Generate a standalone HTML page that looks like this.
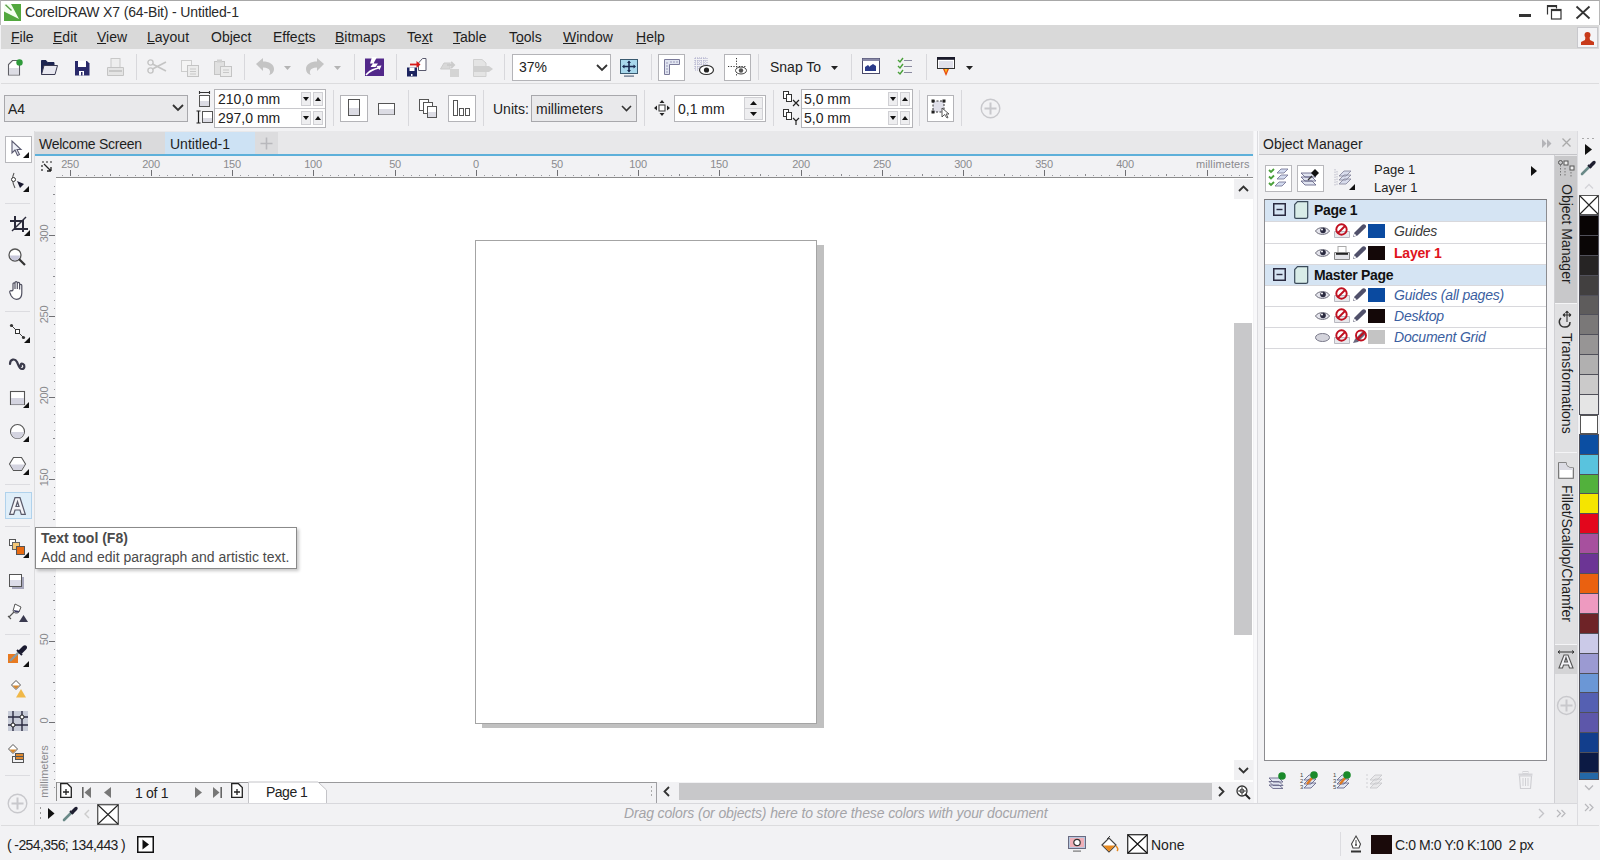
<!DOCTYPE html>
<html><head><meta charset="utf-8">
<style>
*{box-sizing:border-box}
html,body{margin:0;padding:0;width:1600px;height:860px;overflow:hidden;background:#f2f2f4;font-family:"Liberation Sans",sans-serif;color:#1e1e1e}
.a{position:absolute}
.t{position:absolute;white-space:nowrap;line-height:1}
.sep{position:absolute;width:1px;background:#d8d8dc}
svg{position:absolute;overflow:visible}
</style></head><body>
<!-- title bar -->
<div class="a" style="left:0;top:0;width:1600px;height:25px;background:#fff;border-top:1px solid #a8a8a8;border-left:1px solid #b8b8b8;border-right:1px solid #b8b8b8"></div>
<!-- menu bar -->
<div class="a" style="left:1px;top:25px;width:1598px;height:24px;background:#d9d9d9"></div>
<!-- toolbar -->
<div class="a" style="left:1px;top:49px;width:1598px;height:34px;background:#f2f2f4"></div>
<div class="a" style="left:1px;top:83px;width:1598px;height:1px;background:#dcdcde"></div>
<!-- property bar -->
<div class="a" style="left:1px;top:84px;width:1598px;height:47px;background:#f2f2f4"></div>
<!-- toolbox -->
<div class="a" style="left:1px;top:131px;width:34px;height:695px;background:#f2f2f4;border-right:1px solid #dcdcde"></div>
<!-- tabs row -->
<div class="a" style="left:35px;top:131px;width:1218px;height:24px;background:#e8e8ea"></div>
<div class="a" style="left:35px;top:154px;width:1218px;height:2px;background:#5eb0da"></div>
<!-- rulers -->
<div class="a" style="left:35px;top:156px;width:1218px;height:22px;background:#f2f2f4"></div>
<div class="a" style="left:35px;top:156px;width:22px;height:647px;background:#f2f2f4"></div>
<div class="a" style="left:56px;top:177px;width:1px;height:624px;background:#8c8c8c"></div>
<!-- canvas -->
<div class="a" style="left:56px;top:177px;width:1197px;height:605px;background:#fff;border-top:1px solid #8c8c8c"></div>
<!-- page -->
<div class="a" style="left:482px;top:245px;width:342px;height:483px;background:#c0c0c0"></div>
<div class="a" style="left:475px;top:240px;width:342px;height:484px;background:#fff;border:1px solid #a4a4a4"></div>
<!-- page nav bar -->
<div class="a" style="left:57px;top:782px;width:600px;height:21px;background:#f2f2f4;border-top:1px solid #9a9a9c"></div>
<!-- palette row -->
<div class="a" style="left:35px;top:803px;width:1543px;height:1px;background:#d8d8dc"></div>
<div class="a" style="left:1px;top:825px;width:1598px;height:1px;background:#dcdcde"></div>
<!-- docker -->
<div class="a" style="left:1255px;top:131px;width:300px;height:672px;background:#f2f2f4;border-left:1px solid #dcdcde;border-right:1px solid #dcdcde"></div>
<!-- docker tabs -->
<div class="a" style="left:1555px;top:156px;width:23px;height:647px;background:#e8e8ea"></div>
<!-- palette -->
<div class="a" style="left:1577px;top:131px;width:1px;height:695px;background:#dcdcde"></div>

<!-- ===== TITLE BAR ===== -->
<svg style="left:4px;top:4px" width="17" height="17" viewBox="0 0 17 17"><rect x="0" y="0" width="17" height="17" fill="#52a83e"/><path d="M0 0 L7 0 L15 15 L0 7.5 Z" fill="#f4fff0"/><path d="M1.5 0.8 L7.5 6.5" stroke="#5aa048" stroke-width="1.4"/></svg>
<div class="t" style="left:25px;top:5px;font-size:14px;color:#2a2a2a;letter-spacing:-0.15px">CorelDRAW X7 (64-Bit) - Untitled-1</div>
<div class="a" style="left:1519px;top:14px;width:12px;height:3px;background:#333"></div>
<svg style="left:1547px;top:5px" width="15" height="15" viewBox="0 0 15 15"><path d="M0.5 9.5 V0.5 H9.5 V3.5" fill="none" stroke="#333" stroke-width="1.2"/><rect x="0.5" y="0.5" width="9" height="1.6" fill="#333"/><rect x="4.5" y="4.5" width="9.5" height="9.5" fill="#fff" stroke="#333" stroke-width="1.2"/><rect x="4.5" y="4.5" width="9.5" height="1.6" fill="#333"/></svg>
<svg style="left:1576px;top:6px" width="14" height="13" viewBox="0 0 14 13"><path d="M0.5 0.5 L13.5 12.5 M13.5 0.5 L0.5 12.5" stroke="#333" stroke-width="1.8"/></svg>
<!-- ===== MENU ===== -->
<div class="t" style="left:11px;top:30px;font-size:14px"><u>F</u>ile</div>
<div class="t" style="left:53px;top:30px;font-size:14px"><u>E</u>dit</div>
<div class="t" style="left:97px;top:30px;font-size:14px"><u>V</u>iew</div>
<div class="t" style="left:147px;top:30px;font-size:14px"><u>L</u>ayout</div>
<div class="t" style="left:211px;top:30px;font-size:14px">Ob<u>j</u>ect</div>
<div class="t" style="left:273px;top:30px;font-size:14px">Effe<u>c</u>ts</div>
<div class="t" style="left:335px;top:30px;font-size:14px"><u>B</u>itmaps</div>
<div class="t" style="left:407px;top:30px;font-size:14px">Te<u>x</u>t</div>
<div class="t" style="left:453px;top:30px;font-size:14px"><u>T</u>able</div>
<div class="t" style="left:509px;top:30px;font-size:14px">T<u>o</u>ols</div>
<div class="t" style="left:563px;top:30px;font-size:14px"><u>W</u>indow</div>
<div class="t" style="left:636px;top:30px;font-size:14px"><u>H</u>elp</div>
<div class="a" style="left:1577px;top:27px;width:21px;height:21px;background:#f4f4f6;border:1px solid #c8c8cc"></div>
<svg style="left:1580px;top:31px" width="15" height="14" viewBox="0 0 15 14"><circle cx="7.5" cy="4" r="3" fill="#c83a1a"/><path d="M5.5 6 L9.5 6 L10 9 L14 11 L14 14 L1 14 L1 11 L5 9 Z" fill="#c83a1a"/></svg>
<!-- ===== STANDARD TOOLBAR ===== -->
<!-- new -->
<svg style="left:8px;top:60px" width="16" height="16" viewBox="0 0 16 16"><path d="M0.5 15 V4.5 L4.5 0.5 H11.5 V15 Z" fill="#fff" stroke="#606066" stroke-width="1.1"/><rect x="1" y="8" width="10" height="6.5" fill="#dcdce4"/><circle cx="11.5" cy="2.5" r="3.2" fill="#2e9a3a"/></svg>
<!-- open -->
<svg style="left:41px;top:60px" width="17" height="15" viewBox="0 0 17 15"><path d="M0.5 14.5 V0.5 H5 L6.5 2.5 H13 V5" fill="#1c2450" stroke="#1c2450"/><path d="M0.5 14.5 L3 5.5 H16.5 L14 14.5 Z" fill="#e8e8f0" stroke="#3a3a50" stroke-width="1"/></svg>
<!-- save -->
<svg style="left:75px;top:61px" width="15" height="15" viewBox="0 0 15 15"><path d="M0 0 H12 L14.5 2.5 V14.5 H0 Z" fill="#2a2a6a"/><rect x="3" y="0" width="8" height="6" fill="#fff"/><rect x="4" y="10" width="5" height="4.5" fill="#fff"/><rect x="6" y="11" width="1.5" height="3.5" fill="#2a2a6a"/></svg>
<!-- print (disabled) -->
<svg style="left:107px;top:58px" width="17" height="18" viewBox="0 0 17 18"><rect x="4" y="0.5" width="9" height="9" fill="#eee" stroke="#c8c8c8"/><path d="M0.5 17.5 V9.5 H16.5 V17.5 Z" fill="#e4e4e4" stroke="#c4c4c4"/><rect x="2" y="12" width="13" height="2" fill="#c8c8c8"/></svg>
<div class="sep" style="left:136px;top:54px;height:26px"></div>
<!-- cut -->
<svg style="left:147px;top:59px" width="20" height="15" viewBox="0 0 20 15"><circle cx="3.5" cy="3.5" r="2.6" fill="none" stroke="#c4c4c4" stroke-width="1.4"/><circle cx="3.5" cy="11.5" r="2.6" fill="none" stroke="#c4c4c4" stroke-width="1.4"/><path d="M5.5 5 L19 12 M5.5 10 L19 3" stroke="#c4c4c4" stroke-width="1.6"/></svg>
<!-- copy -->
<svg style="left:181px;top:60px" width="18" height="17" viewBox="0 0 18 17"><rect x="0.5" y="0.5" width="10" height="11" fill="#f4f4f4" stroke="#cdcdcd"/><rect x="6.5" y="5.5" width="11" height="11" fill="#ececec" stroke="#c4c4c4"/><path d="M9 9h6M9 11.5h6M9 14h6" stroke="#c8c8c8"/></svg>
<!-- paste -->
<svg style="left:214px;top:59px" width="18" height="18" viewBox="0 0 18 18"><rect x="0.5" y="2.5" width="10" height="13" fill="#e0e0e0" stroke="#c4c4c4"/><rect x="3" y="0.5" width="5" height="3" fill="#d0d0d0"/><rect x="6.5" y="7.5" width="11" height="10" fill="#ececec" stroke="#c4c4c4"/><path d="M9 11h6M9 13.5h6" stroke="#c8c8c8"/></svg>
<div class="sep" style="left:244px;top:54px;height:26px"></div>
<!-- undo -->
<svg style="left:256px;top:58px" width="19" height="17" viewBox="0 0 19 17"><path d="M0 6 L7 0 V3.5 C13 3.5 18 6 18 11 C18 14 16 16.5 13 17 C15 15 15 9.5 7 9.5 V13 Z" fill="#c4c4c4"/></svg>
<svg style="left:284px;top:66px" width="7" height="4" viewBox="0 0 7 4"><path d="M0 0 H7 L3.5 4 Z" fill="#b4b4b4"/></svg>
<svg style="left:305px;top:58px" width="19" height="17" viewBox="0 0 19 17"><path d="M19 6 L12 0 V3.5 C6 3.5 1 6 1 11 C1 14 3 16.5 6 17 C4 15 4 9.5 12 9.5 V13 Z" fill="#c4c4c4"/></svg>
<svg style="left:334px;top:66px" width="7" height="4" viewBox="0 0 7 4"><path d="M0 0 H7 L3.5 4 Z" fill="#b4b4b4"/></svg>
<div class="sep" style="left:354px;top:54px;height:26px"></div>
<!-- corel connect purple -->
<svg style="left:365px;top:57px" width="19" height="19" viewBox="0 0 19 19"><path d="M0 1.5 H19 V19 H0 Z" fill="#52288a"/><path d="M7 0 H12 L8.5 6.5 H13 L10.5 10 H5.5 L8 6.5 H5 Z" fill="#fff"/><path d="M0.5 17.5 C4 13 8 11.5 12.5 10.5 L11.5 9 L16.5 8.5 L14.5 13 L13.5 11.8 C9 13 5 15 1.5 18.5 Z" fill="#fff"/></svg>
<div class="sep" style="left:396px;top:54px;height:26px"></div>
<!-- import -->
<svg style="left:407px;top:58px" width="20" height="19" viewBox="0 0 20 19"><path d="M11.5 5 L15.5 0.5 H19 V12.5 H11.5 Z" fill="#fff" stroke="#5a5a6e" stroke-width="1"/><rect x="0" y="9.5" width="10" height="9" fill="#1c2460"/><rect x="2.5" y="9.5" width="5" height="3.5" fill="#fff"/><rect x="4" y="16" width="1.5" height="2" fill="#fff"/><path d="M3 6.5 H11" stroke="#d81818" stroke-width="1.8"/><path d="M9.5 3 L13.5 6.5 L9.5 10 Z" fill="#d81818"/></svg>
<!-- export disabled -->
<svg style="left:440px;top:59px" width="20" height="18" viewBox="0 0 20 18"><path d="M0.5 10 L4 4 H10 V10 Z" fill="#d8d8d8" stroke="#ccc"/><path d="M7 6 H14 M11 3 L14 6 L11 9" stroke="#ccc" stroke-width="2" fill="none"/><rect x="10" y="10" width="9" height="8" fill="#d4d4d4"/></svg>
<!-- pdf disabled -->
<svg style="left:473px;top:59px" width="20" height="18" viewBox="0 0 20 18"><path d="M0.5 17.5 V0.5 H9 L13 4 V17.5 Z" fill="#e4e4e4" stroke="#d0d0d0"/><rect x="1" y="7" width="15" height="6" fill="#d0d0d0"/><path d="M16 7 L20 10 L16 13 Z" fill="#d0d0d0"/></svg>
<div class="sep" style="left:504px;top:54px;height:26px"></div>
<!-- zoom combo -->
<div class="a" style="left:512px;top:54px;width:99px;height:27px;background:#fff;border:1px solid #b4b4b8"></div>
<div class="t" style="left:519px;top:60px;font-size:14px;color:#222">37%</div>
<svg style="left:596px;top:64px" width="12" height="8" viewBox="0 0 12 8"><path d="M1 1 L6 6 L11 1" fill="none" stroke="#333" stroke-width="1.8"/></svg>
<!-- full screen preview -->
<svg style="left:620px;top:59px" width="18" height="18" viewBox="0 0 18 18"><rect x="0.5" y="0.5" width="17" height="14" fill="#a8d8ec" stroke="#3a5a70"/><path d="M9 2.5 V12.5 M3 7.5 H15" stroke="#1a2a50" stroke-width="1.6"/><path d="M9 1.5 L7 4 H11 Z M9 13.5 L7 11 H11 Z M2 7.5 L4.5 5.5 V9.5 Z M16 7.5 L13.5 5.5 V9.5 Z" fill="#1a2a50"/><rect x="4" y="16.5" width="10" height="1.2" fill="#5a6a80"/></svg>
<div class="sep" style="left:651px;top:54px;height:26px"></div>
<!-- rulers (pressed) -->
<div class="a" style="left:658px;top:54px;width:27px;height:27px;background:#fff;border:1px solid #b4b4b8"></div>
<svg style="left:664px;top:59px" width="16" height="16" viewBox="0 0 16 16"><path d="M0.5 15.5 V0.5 H15.5 V5.5 H5.5 V15.5 Z" fill="#e0e4f0" stroke="#7a7a9a"/><path d="M2 4 H4 M2 7 H4 M2 10 H4 M2 13 H4 M7 2 V4 M10 2 V4 M13 2 V4" stroke="#9a9aba"/></svg>
<!-- grid -->
<svg style="left:694px;top:57px" width="20" height="19" viewBox="0 0 20 19"><path d="M1 1h12M1 4h12M1 7h12M1 10h12M1 13h12M1 1v12M4 1v12M7 1v12M10 1v12M13 1v12" stroke="#a8a8c8" stroke-dasharray="1 1"/><ellipse cx="12.5" cy="13" rx="7" ry="4.5" fill="#fff" stroke="#333" stroke-width="1.2"/><circle cx="12.5" cy="13" r="2.6" fill="#222"/></svg>
<!-- guides (pressed) -->
<div class="a" style="left:724px;top:54px;width:27px;height:27px;background:#fff;border:1px solid #b4b4b8"></div>
<svg style="left:728px;top:58px" width="19" height="18" viewBox="0 0 19 18"><path d="M0 8.5 H18 M8.5 0 V18" stroke="#333" stroke-dasharray="1.2 1.5"/><ellipse cx="13" cy="12.5" rx="5.5" ry="3.5" fill="#fff" stroke="#444"/><circle cx="13" cy="12.5" r="2.2" fill="#555"/></svg>
<div class="sep" style="left:758px;top:54px;height:26px"></div>
<div class="t" style="left:770px;top:60px;font-size:14px;color:#222">Snap To</div>
<svg style="left:831px;top:66px" width="7" height="4" viewBox="0 0 7 4"><path d="M0 0 H7 L3.5 4 Z" fill="#222"/></svg>
<div class="sep" style="left:851px;top:54px;height:26px"></div>
<!-- options -->
<svg style="left:862px;top:58px" width="18" height="16" viewBox="0 0 18 16"><rect x="0.5" y="0.5" width="17" height="15" fill="#fff" stroke="#4a4a6a"/><rect x="0.5" y="0.5" width="17" height="2.5" fill="#8a8aa8"/><path d="M3 13 V9 L6 7 L8 9 V13 Z M8 13 V8 L11 6 L14 8 V13 Z" fill="#2a3a8a"/></svg>
<!-- checklist -->
<svg style="left:897px;top:57px" width="16" height="18" viewBox="0 0 16 18"><path d="M1 3 L3 5 L6 1 M1 9 L3 11 L6 7 M1 15 L3 17 L6 13" fill="none" stroke="#4aa03a" stroke-width="1.4"/><path d="M7 3.5 H15 M7 9.5 H15 M7 15.5 H15" stroke="#8a8aa0" stroke-width="1.2"/></svg>
<div class="sep" style="left:926px;top:54px;height:26px"></div>
<!-- launcher -->
<svg style="left:937px;top:57px" width="18" height="19" viewBox="0 0 18 19"><rect x="0.5" y="0.5" width="17" height="11" fill="#fff" stroke="#333"/><rect x="0" y="0" width="18" height="2.8" fill="#1a1a2a"/><rect x="2" y="4" width="14" height="7" fill="#e0e0ea"/><path d="M6 12 L9 19 L12 12 Z" fill="#e84a10"/><path d="M7.5 12 L9 16 L10.5 12 Z" fill="#f8c020"/></svg>
<svg style="left:966px;top:66px" width="7" height="4" viewBox="0 0 7 4"><path d="M0 0 H7 L3.5 4 Z" fill="#222"/></svg>
<!-- ===== PROPERTY BAR ===== -->
<div class="a" style="left:4px;top:95px;width:184px;height:27px;background:#e9e9eb;border:1px solid #a8a8ac"></div>
<div class="t" style="left:8px;top:102px;font-size:14px;color:#222">A4</div>
<svg style="left:172px;top:104px" width="12" height="8" viewBox="0 0 12 8"><path d="M1 1 L6 6 L11 1" fill="none" stroke="#333" stroke-width="1.8"/></svg>
<!-- width/height icons -->
<svg style="left:198px;top:91px" width="13" height="16" viewBox="0 0 13 16"><path d="M1 1.5 H12 M1.5 0 V3 M11.5 0 V3" stroke="#333" stroke-width="1.1"/><rect x="1.5" y="4.5" width="10" height="11" fill="#fff" stroke="#555"/><rect x="2" y="10" width="9" height="5" fill="#dcdce4"/></svg>
<svg style="left:196px;top:110px" width="17" height="14" viewBox="0 0 17 14"><path d="M2.5 1 V13 M0.5 1 H4.5 M0.5 13 H4.5" stroke="#222" stroke-width="1.2"/><rect x="6.5" y="1.5" width="10" height="11" fill="#fff" stroke="#555"/><rect x="7" y="8" width="9" height="4" fill="#dcdce4"/></svg>
<!-- size spin -->
<div class="a" style="left:214px;top:89px;width:112px;height:39px;background:#fff;border:1px solid #b4b4b8"></div>
<div class="a" style="left:215px;top:108px;width:110px;height:1px;background:#c8c8cc"></div>
<div class="t" style="left:218px;top:92px;font-size:14px;color:#222">210,0 mm</div>
<div class="t" style="left:218px;top:111px;font-size:14px;color:#222">297,0 mm</div>
<div class="a" style="left:301px;top:92px;width:10px;height:14px;background:#eeeef0;border:1px solid #d0d0d4"></div>
<div class="a" style="left:313px;top:92px;width:10px;height:14px;background:#eeeef0;border:1px solid #d0d0d4"></div>
<div class="a" style="left:301px;top:111px;width:10px;height:14px;background:#eeeef0;border:1px solid #d0d0d4"></div>
<div class="a" style="left:313px;top:111px;width:10px;height:14px;background:#eeeef0;border:1px solid #d0d0d4"></div>
<svg style="left:303px;top:97px" width="6" height="4" viewBox="0 0 6 4"><path d="M0 0 H6 L3 4 Z" fill="#111"/></svg>
<svg style="left:315px;top:97px" width="6" height="4" viewBox="0 0 6 4"><path d="M0 4 H6 L3 0 Z" fill="#111"/></svg>
<svg style="left:303px;top:116px" width="6" height="4" viewBox="0 0 6 4"><path d="M0 0 H6 L3 4 Z" fill="#111"/></svg>
<svg style="left:315px;top:116px" width="6" height="4" viewBox="0 0 6 4"><path d="M0 4 H6 L3 0 Z" fill="#111"/></svg>
<div class="sep" style="left:333px;top:90px;height:36px"></div>
<!-- portrait (pressed) -->
<div class="a" style="left:340px;top:95px;width:28px;height:27px;background:#fff;border:1px solid #b4b4b8"></div>
<svg style="left:347px;top:99px" width="14" height="18" viewBox="0 0 14 18"><rect x="1.5" y="0.5" width="11" height="16" fill="#fff" stroke="#555"/><rect x="2" y="9" width="10" height="7" fill="#dcdce4"/></svg>
<svg style="left:378px;top:103px" width="18" height="13" viewBox="0 0 18 13"><rect x="0.5" y="0.5" width="16" height="11" fill="#fff" stroke="#555"/><rect x="1" y="6" width="15" height="5.5" fill="#dcdce4"/></svg>
<div class="sep" style="left:408px;top:90px;height:36px"></div>
<!-- all pages -->
<svg style="left:419px;top:99px" width="19" height="19" viewBox="0 0 19 19"><rect x="0.5" y="0.5" width="9" height="11" fill="#fff" stroke="#555"/><rect x="4.5" y="3.5" width="9" height="11" fill="#fff" stroke="#555"/><rect x="8.5" y="7.5" width="9" height="11" fill="#fff" stroke="#555"/><rect x="9" y="13" width="8" height="5" fill="#dcdce4"/></svg>
<div class="a" style="left:448px;top:95px;width:28px;height:27px;background:#fff;border:1px solid #b4b4b8"></div>
<svg style="left:452px;top:100px" width="20" height="17" viewBox="0 0 20 17"><rect x="1.5" y="0.5" width="4" height="15" fill="#fff" stroke="#555"/><rect x="7.5" y="8.5" width="4" height="7" fill="#fff" stroke="#555"/><rect x="13.5" y="8.5" width="4" height="7" fill="#fff" stroke="#555"/></svg>
<div class="sep" style="left:483px;top:90px;height:36px"></div>
<div class="t" style="left:493px;top:102px;font-size:14px;color:#222">Units:</div>
<div class="a" style="left:531px;top:95px;width:106px;height:27px;background:#e9e9eb;border:1px solid #a8a8ac"></div>
<div class="t" style="left:536px;top:102px;font-size:14px;color:#222">millimeters</div>
<svg style="left:621px;top:105px" width="11" height="7" viewBox="0 0 11 7"><path d="M1 1 L5.5 5.5 L10 1" fill="none" stroke="#333" stroke-width="1.6"/></svg>
<div class="sep" style="left:644px;top:90px;height:36px"></div>
<!-- nudge -->
<svg style="left:654px;top:100px" width="16" height="16" viewBox="0 0 16 16"><rect x="5" y="5" width="6" height="6" fill="#fff" stroke="#333"/><path d="M8 0 L5.5 3 H10.5 Z M8 16 L5.5 13 H10.5 Z M0 8 L3 5.5 V10.5 Z M16 8 L13 5.5 V10.5 Z" fill="#222"/></svg>
<div class="a" style="left:674px;top:95px;width:92px;height:27px;background:#fff;border:1px solid #b4b4b8"></div>
<div class="t" style="left:678px;top:102px;font-size:14px;color:#222">0,1 mm</div>
<div class="a" style="left:744px;top:97px;width:19px;height:23px;background:#eeeef0;border:1px solid #d0d0d4"></div>
<div class="a" style="left:745px;top:108px;width:17px;height:1px;background:#d0d0d4"></div>
<svg style="left:750px;top:101px" width="7" height="4" viewBox="0 0 7 4"><path d="M0 4 H7 L3.5 0 Z" fill="#111"/></svg>
<svg style="left:750px;top:112px" width="7" height="4" viewBox="0 0 7 4"><path d="M0 0 H7 L3.5 4 Z" fill="#111"/></svg>
<div class="sep" style="left:773px;top:90px;height:36px"></div>
<!-- duplicate distance -->
<svg style="left:783px;top:91px" width="17" height="15" viewBox="0 0 17 15"><rect x="0.5" y="0.5" width="5" height="7" fill="#fff" stroke="#333"/><rect x="3.5" y="3.5" width="5" height="7" fill="#fff" stroke="#333"/><path d="M10 9 L16 15 M16 9 L10 15" stroke="#222" stroke-width="1.2"/></svg>
<svg style="left:783px;top:109px" width="17" height="16" viewBox="0 0 17 16"><rect x="0.5" y="0.5" width="5" height="7" fill="#fff" stroke="#333"/><rect x="3.5" y="3.5" width="5" height="7" fill="#fff" stroke="#333"/><path d="M10 9 L13 12 L16 9 M13 12 V16" stroke="#222" stroke-width="1.2" fill="none"/></svg>
<div class="a" style="left:801px;top:89px;width:112px;height:39px;background:#fff;border:1px solid #b4b4b8"></div>
<div class="a" style="left:802px;top:108px;width:110px;height:1px;background:#c8c8cc"></div>
<div class="t" style="left:804px;top:92px;font-size:14px;color:#222">5,0 mm</div>
<div class="t" style="left:804px;top:111px;font-size:14px;color:#222">5,0 mm</div>
<div class="a" style="left:888px;top:92px;width:10px;height:14px;background:#eeeef0;border:1px solid #d0d0d4"></div>
<div class="a" style="left:900px;top:92px;width:10px;height:14px;background:#eeeef0;border:1px solid #d0d0d4"></div>
<div class="a" style="left:888px;top:111px;width:10px;height:14px;background:#eeeef0;border:1px solid #d0d0d4"></div>
<div class="a" style="left:900px;top:111px;width:10px;height:14px;background:#eeeef0;border:1px solid #d0d0d4"></div>
<svg style="left:890px;top:97px" width="6" height="4" viewBox="0 0 6 4"><path d="M0 0 H6 L3 4 Z" fill="#111"/></svg>
<svg style="left:902px;top:97px" width="6" height="4" viewBox="0 0 6 4"><path d="M0 4 H6 L3 0 Z" fill="#111"/></svg>
<svg style="left:890px;top:116px" width="6" height="4" viewBox="0 0 6 4"><path d="M0 0 H6 L3 4 Z" fill="#111"/></svg>
<svg style="left:902px;top:116px" width="6" height="4" viewBox="0 0 6 4"><path d="M0 4 H6 L3 0 Z" fill="#111"/></svg>
<div class="sep" style="left:919px;top:90px;height:36px"></div>
<div class="a" style="left:927px;top:95px;width:27px;height:27px;background:#fff;border:1px solid #b4b4b8"></div>
<svg style="left:931px;top:99px" width="20" height="19" viewBox="0 0 20 19"><rect x="2" y="2" width="11" height="11" fill="#e0e0ea" stroke="#333" stroke-dasharray="2 1.5"/><rect x="0.5" y="0.5" width="3" height="3" fill="#222"/><rect x="11.5" y="0.5" width="3" height="3" fill="#222"/><rect x="0.5" y="11.5" width="3" height="3" fill="#222"/><path d="M11 9 V18 L13.5 15.5 L16 19 L17 18.5 L15 15 H18 Z" fill="#fff" stroke="#444" stroke-width=".9"/></svg>
<div class="sep" style="left:961px;top:90px;height:36px"></div>
<svg style="left:980px;top:98px" width="21" height="21" viewBox="0 0 21 21"><circle cx="10.5" cy="10.5" r="9.3" fill="none" stroke="#c8c8cc" stroke-width="1.4"/><path d="M10.5 4.5 V16.5 M4.5 10.5 H16.5" stroke="#c8c8cc" stroke-width="2"/></svg>
<!-- ===== TOOLBOX ===== -->
<div class="a" style="left:5px;top:136px;width:27px;height:27px;background:#fff;border:1px solid #b8b8bc"></div>
<svg style="left:11px;top:140px" width="12" height="17" viewBox="0 0 12 17"><path d="M1 1 V13 L4 10 L6.5 15.5 L8.5 14.5 L6 9.5 H10 Z" fill="#eef0f8" stroke="#5a5a70" stroke-width="1.1"/></svg>
<svg style="left:23px;top:152px" width="6" height="6" viewBox="0 0 6 6"><path d="M6 0 V6 H0 Z" fill="#111"/></svg>
<!-- shape tool -->
<svg style="left:9px;top:172px" width="20" height="20" viewBox="0 0 20 20"><path d="M5 1 C3 5 3 10 6 16" fill="none" stroke="#555" stroke-width="1.1"/><circle cx="4.5" cy="7.5" r="2" fill="#fff" stroke="#333"/><path d="M8 9 L15 12 L11 16 Z" fill="#1a1a30"/><path d="M20 14 V20 H14 Z" fill="#111"/></svg>
<div class="a" style="left:5px;top:203px;width:25px;height:1px;background:#dcdce0"></div>
<!-- crop -->
<svg style="left:9px;top:215px" width="21" height="21" viewBox="0 0 21 21"><path d="M6 1 V14 H19 M1 6 H14 V17" fill="none" stroke="#2a2a3a" stroke-width="2"/><path d="M3 16 L17 2" stroke="#2a2a3a" stroke-width="1.4"/><path d="M21 15 V21 H15 Z" fill="#111"/></svg>
<!-- zoom -->
<svg style="left:8px;top:248px" width="18" height="19" viewBox="0 0 18 19"><circle cx="7" cy="7" r="6" fill="#fff" stroke="#555" stroke-width="1.3"/><path d="M2 7.5 H12 A5 5 0 0 1 2 7.5Z" fill="#c8c8dc"/><path d="M11 11 L17 17" stroke="#333" stroke-width="2.2"/></svg>
<!-- pan -->
<svg style="left:9px;top:281px" width="17" height="19" viewBox="0 0 17 19"><path d="M4 9 V3 C4 1.5 6 1.5 6 3 V8 V1.8 C6 0.3 8.3 0.3 8.3 1.8 V8 V2.5 C8.3 1 10.6 1 10.6 2.5 V8.5 V4.5 C10.6 3 12.8 3 12.8 4.5 V12 C12.8 16 10.5 18.3 7.5 18.3 C5 18.3 3.5 17 2 14.5 L0.8 11.5 C0.3 10 2 9 3 10 Z" fill="#fff" stroke="#505060" stroke-width="1.2"/></svg>
<div class="a" style="left:5px;top:311px;width:25px;height:1px;background:#dcdce0"></div>
<!-- bezier -->
<svg style="left:9px;top:323px" width="21" height="21" viewBox="0 0 21 21"><path d="M2.5 2.5 L14.5 14.5" stroke="#444" stroke-width="1"/><circle cx="2.5" cy="2.5" r="1.6" fill="#333"/><rect x="6.5" y="6.5" width="4" height="4" fill="#fff" stroke="#333"/><circle cx="14.5" cy="14.5" r="1.6" fill="#333"/><path d="M21 14 V20 H15 Z" fill="#111"/></svg>
<!-- artistic media -->
<svg style="left:9px;top:358px" width="17" height="13" viewBox="0 0 17 13"><path d="M1 6 C1 1 6 0 8 4 C9.5 7 10 11 13 11 C16 11 16 7 14 6 C12 5 11 7 12 8" fill="none" stroke="#3a3a4a" stroke-width="2.2" stroke-linecap="round"/></svg>
<!-- rectangle -->
<svg style="left:10px;top:391px" width="20" height="18" viewBox="0 0 20 18"><rect x="0.5" y="0.5" width="14" height="13" fill="#fff" stroke="#555" stroke-width="1.1"/><rect x="1" y="7" width="13" height="6.5" fill="#d4d4e0"/><path d="M19 11 V17 H13 Z" fill="#111"/></svg>
<!-- ellipse -->
<svg style="left:10px;top:424px" width="20" height="18" viewBox="0 0 20 18"><circle cx="7.5" cy="7.5" r="7" fill="#fff" stroke="#555" stroke-width="1.1"/><path d="M1 8 H14 A6.5 6.5 0 0 1 1 8Z" fill="#d4d4e0"/><path d="M19 12 V18 H13 Z" fill="#111"/></svg>
<!-- polygon -->
<svg style="left:9px;top:457px" width="21" height="19" viewBox="0 0 21 19"><path d="M4.5 0.5 H12.5 L16.5 7 L12.5 13.5 H4.5 L0.5 7 Z" fill="#fff" stroke="#555" stroke-width="1.1"/><path d="M1.2 7.5 H15.8 L12.3 13 H4.7 Z" fill="#d4d4e0"/><path d="M20 12 V18 H14 Z" fill="#111"/></svg>
<div class="a" style="left:5px;top:484px;width:25px;height:1px;background:#dcdce0"></div>
<!-- text tool highlighted -->
<div class="a" style="left:5px;top:492px;width:27px;height:27px;background:#dfeef9;border:1px solid #b0d2ec"></div>
<svg style="left:9px;top:497px" width="17" height="18" viewBox="0 0 17 18"><path d="M6 0.7 H11 L16.3 17.3 H12.3 L11 13 H6 L4.7 17.3 H0.7 Z M7 9.5 H10 L8.5 4.5 Z" fill="#f4f4f8" stroke="#5a5a6a" stroke-width="1.2" fill-rule="evenodd"/></svg>
<div class="a" style="left:5px;top:526px;width:25px;height:1px;background:#dcdce0"></div>
<!-- blend -->
<svg style="left:9px;top:539px" width="20" height="19" viewBox="0 0 20 19"><rect x="0.5" y="0.5" width="6" height="6" fill="#fff" stroke="#555"/><rect x="3.5" y="3.5" width="7" height="7" fill="#f4c878" stroke="#666"/><rect x="7.5" y="7.5" width="8" height="8" fill="#e86a10" stroke="#555"/><path d="M20 13 V19 H14 Z" fill="#111"/></svg>
<!-- drop shadow -->
<svg style="left:9px;top:574px" width="16" height="16" viewBox="0 0 16 16"><rect x="3" y="3" width="12" height="12" fill="#a8a8bc"/><rect x="0.5" y="0.5" width="12" height="12" fill="#fff" stroke="#555"/><rect x="1" y="6" width="11" height="6" fill="#dcdce8"/></svg>
<!-- transparency -->
<svg style="left:8px;top:603px" width="20" height="20" viewBox="0 0 20 20"><path d="M7 1 L13 4 L11 9 C9 11 6 10 5 8 Z" fill="#fff" stroke="#555"/><path d="M5.5 7 L11.5 8 C10 10.5 6.5 10 5.5 7Z" fill="#3a3a60"/><path d="M6 9 L1 14 M0 13 L3 16" stroke="#555" stroke-width="1.1"/><path d="M11 19 L15.5 12 L20 19 Z" fill="#3a3a50"/></svg>
<div class="a" style="left:5px;top:634px;width:25px;height:1px;background:#dcdce0"></div>
<!-- eyedropper -->
<svg style="left:7px;top:645px" width="22" height="22" viewBox="0 0 22 22"><rect x="1" y="9" width="10" height="9" fill="#e87a20"/><path d="M3 16 L13 6" stroke="#8a9aa0" stroke-width="2.4"/><path d="M11 6 L16 1 C17 0 19 0 19.5 1 C20.5 2 20 3.5 19 4.5 L15 8.5 Z" fill="#1a1a30"/><path d="M10 5 L15 10" stroke="#1a1a30" stroke-width="2"/><path d="M22 16 V22 H16 Z" fill="#111"/></svg>
<!-- interactive fill -->
<svg style="left:11px;top:680px" width="15" height="18" viewBox="0 0 15 18"><path d="M0.5 5 L5 0.5 L9.5 5 L5 9.5 Z" fill="#fff" stroke="#555"/><path d="M1.5 5.5 L8.5 5.5 L5 9 Z" fill="#d88a30"/><path d="M5 17.5 L10 9 L15 17.5 Z" fill="#f0b848"/></svg>
<!-- mesh -->
<svg style="left:8px;top:711px" width="20" height="20" viewBox="0 0 20 20"><rect x="0" y="0" width="20" height="20" fill="#c8ccd8"/><path d="M0 6 H20 M0 14 H20 M5 0 V20 M14 0 V20" stroke="#2a2a40" stroke-width="1.4"/><circle cx="14" cy="6" r="2" fill="#fff" stroke="#222"/><circle cx="5" cy="14" r="2" fill="#fff" stroke="#222"/></svg>
<!-- smart fill -->
<svg style="left:8px;top:744px" width="20" height="19" viewBox="0 0 20 19"><path d="M0.5 5 L5 0.5 L9.5 5 L5 9.5 Z" fill="#fff" stroke="#555"/><path d="M1.5 5.5 L8.5 5.5 L5 9 Z" fill="#d88a30"/><rect x="7.5" y="9.5" width="8" height="6" fill="#e08a30" stroke="#555"/><rect x="4.5" y="12.5" width="11" height="6" fill="none" stroke="#555"/></svg>
<div class="a" style="left:5px;top:775px;width:25px;height:1px;background:#dcdce0"></div>
<svg style="left:7px;top:793px" width="21" height="21" viewBox="0 0 21 21"><circle cx="10.5" cy="10.5" r="9.3" fill="none" stroke="#c8c8cc" stroke-width="1.4"/><path d="M10.5 4.5 V16.5 M4.5 10.5 H16.5" stroke="#c8c8cc" stroke-width="2"/></svg>
<div class="a" style="left:35px;top:132px;width:130px;height:22px;background:#dadadc"></div>
<div class="t" style="left:39px;top:137px;font-size:14px;color:#1e1e1e;letter-spacing:-0.25px">Welcome Screen</div>
<div class="a" style="left:165px;top:132px;width:90px;height:22px;background:#cde2f4"></div>
<div class="t" style="left:170px;top:137px;font-size:14px;color:#1e1e1e">Untitled-1</div>
<div class="a" style="left:255px;top:132px;width:23px;height:22px;background:#dcdcde"></div>
<svg style="left:260px;top:137px" width="13" height="13" viewBox="0 0 13 13"><path d="M6.5 0.5 V12.5 M0.5 6.5 H12.5" stroke="#b8b8bc" stroke-width="1.6"/></svg>
<div class="a" style="left:62px;top:175px;width:1px;height:1px;background:#9a9a9e"></div>
<div class="a" style="left:70px;top:170px;width:1px;height:6px;background:#707074"></div>
<div class="t" style="left:40px;width:60px;text-align:center;top:159px;font-size:11px;color:#8a8a8e;letter-spacing:-0.3px">250</div>
<div class="a" style="left:78px;top:175px;width:1px;height:1px;background:#9a9a9e"></div>
<div class="a" style="left:86px;top:175px;width:1px;height:1px;background:#9a9a9e"></div>
<div class="a" style="left:94px;top:175px;width:1px;height:1px;background:#9a9a9e"></div>
<div class="a" style="left:102px;top:175px;width:1px;height:1px;background:#9a9a9e"></div>
<div class="a" style="left:110px;top:174px;width:1px;height:2px;background:#8a8a8e"></div>
<div class="a" style="left:119px;top:175px;width:1px;height:1px;background:#9a9a9e"></div>
<div class="a" style="left:127px;top:175px;width:1px;height:1px;background:#9a9a9e"></div>
<div class="a" style="left:135px;top:175px;width:1px;height:1px;background:#9a9a9e"></div>
<div class="a" style="left:143px;top:175px;width:1px;height:1px;background:#9a9a9e"></div>
<div class="a" style="left:151px;top:170px;width:1px;height:6px;background:#707074"></div>
<div class="t" style="left:121px;width:60px;text-align:center;top:159px;font-size:11px;color:#8a8a8e;letter-spacing:-0.3px">200</div>
<div class="a" style="left:159px;top:175px;width:1px;height:1px;background:#9a9a9e"></div>
<div class="a" style="left:167px;top:175px;width:1px;height:1px;background:#9a9a9e"></div>
<div class="a" style="left:175px;top:175px;width:1px;height:1px;background:#9a9a9e"></div>
<div class="a" style="left:183px;top:175px;width:1px;height:1px;background:#9a9a9e"></div>
<div class="a" style="left:192px;top:174px;width:1px;height:2px;background:#8a8a8e"></div>
<div class="a" style="left:200px;top:175px;width:1px;height:1px;background:#9a9a9e"></div>
<div class="a" style="left:208px;top:175px;width:1px;height:1px;background:#9a9a9e"></div>
<div class="a" style="left:216px;top:175px;width:1px;height:1px;background:#9a9a9e"></div>
<div class="a" style="left:224px;top:175px;width:1px;height:1px;background:#9a9a9e"></div>
<div class="a" style="left:232px;top:170px;width:1px;height:6px;background:#707074"></div>
<div class="t" style="left:202px;width:60px;text-align:center;top:159px;font-size:11px;color:#8a8a8e;letter-spacing:-0.3px">150</div>
<div class="a" style="left:240px;top:175px;width:1px;height:1px;background:#9a9a9e"></div>
<div class="a" style="left:248px;top:175px;width:1px;height:1px;background:#9a9a9e"></div>
<div class="a" style="left:257px;top:175px;width:1px;height:1px;background:#9a9a9e"></div>
<div class="a" style="left:265px;top:175px;width:1px;height:1px;background:#9a9a9e"></div>
<div class="a" style="left:273px;top:174px;width:1px;height:2px;background:#8a8a8e"></div>
<div class="a" style="left:281px;top:175px;width:1px;height:1px;background:#9a9a9e"></div>
<div class="a" style="left:289px;top:175px;width:1px;height:1px;background:#9a9a9e"></div>
<div class="a" style="left:297px;top:175px;width:1px;height:1px;background:#9a9a9e"></div>
<div class="a" style="left:305px;top:175px;width:1px;height:1px;background:#9a9a9e"></div>
<div class="a" style="left:313px;top:170px;width:1px;height:6px;background:#707074"></div>
<div class="t" style="left:283px;width:60px;text-align:center;top:159px;font-size:11px;color:#8a8a8e;letter-spacing:-0.3px">100</div>
<div class="a" style="left:322px;top:175px;width:1px;height:1px;background:#9a9a9e"></div>
<div class="a" style="left:330px;top:175px;width:1px;height:1px;background:#9a9a9e"></div>
<div class="a" style="left:338px;top:175px;width:1px;height:1px;background:#9a9a9e"></div>
<div class="a" style="left:346px;top:175px;width:1px;height:1px;background:#9a9a9e"></div>
<div class="a" style="left:354px;top:174px;width:1px;height:2px;background:#8a8a8e"></div>
<div class="a" style="left:362px;top:175px;width:1px;height:1px;background:#9a9a9e"></div>
<div class="a" style="left:370px;top:175px;width:1px;height:1px;background:#9a9a9e"></div>
<div class="a" style="left:378px;top:175px;width:1px;height:1px;background:#9a9a9e"></div>
<div class="a" style="left:386px;top:175px;width:1px;height:1px;background:#9a9a9e"></div>
<div class="a" style="left:395px;top:170px;width:1px;height:6px;background:#707074"></div>
<div class="t" style="left:365px;width:60px;text-align:center;top:159px;font-size:11px;color:#8a8a8e;letter-spacing:-0.3px">50</div>
<div class="a" style="left:403px;top:175px;width:1px;height:1px;background:#9a9a9e"></div>
<div class="a" style="left:411px;top:175px;width:1px;height:1px;background:#9a9a9e"></div>
<div class="a" style="left:419px;top:175px;width:1px;height:1px;background:#9a9a9e"></div>
<div class="a" style="left:427px;top:175px;width:1px;height:1px;background:#9a9a9e"></div>
<div class="a" style="left:435px;top:174px;width:1px;height:2px;background:#8a8a8e"></div>
<div class="a" style="left:443px;top:175px;width:1px;height:1px;background:#9a9a9e"></div>
<div class="a" style="left:451px;top:175px;width:1px;height:1px;background:#9a9a9e"></div>
<div class="a" style="left:460px;top:175px;width:1px;height:1px;background:#9a9a9e"></div>
<div class="a" style="left:468px;top:175px;width:1px;height:1px;background:#9a9a9e"></div>
<div class="a" style="left:476px;top:170px;width:1px;height:6px;background:#707074"></div>
<div class="t" style="left:446px;width:60px;text-align:center;top:159px;font-size:11px;color:#8a8a8e;letter-spacing:-0.3px">0</div>
<div class="a" style="left:484px;top:175px;width:1px;height:1px;background:#9a9a9e"></div>
<div class="a" style="left:492px;top:175px;width:1px;height:1px;background:#9a9a9e"></div>
<div class="a" style="left:500px;top:175px;width:1px;height:1px;background:#9a9a9e"></div>
<div class="a" style="left:508px;top:175px;width:1px;height:1px;background:#9a9a9e"></div>
<div class="a" style="left:516px;top:174px;width:1px;height:2px;background:#8a8a8e"></div>
<div class="a" style="left:525px;top:175px;width:1px;height:1px;background:#9a9a9e"></div>
<div class="a" style="left:533px;top:175px;width:1px;height:1px;background:#9a9a9e"></div>
<div class="a" style="left:541px;top:175px;width:1px;height:1px;background:#9a9a9e"></div>
<div class="a" style="left:549px;top:175px;width:1px;height:1px;background:#9a9a9e"></div>
<div class="a" style="left:557px;top:170px;width:1px;height:6px;background:#707074"></div>
<div class="t" style="left:527px;width:60px;text-align:center;top:159px;font-size:11px;color:#8a8a8e;letter-spacing:-0.3px">50</div>
<div class="a" style="left:565px;top:175px;width:1px;height:1px;background:#9a9a9e"></div>
<div class="a" style="left:573px;top:175px;width:1px;height:1px;background:#9a9a9e"></div>
<div class="a" style="left:581px;top:175px;width:1px;height:1px;background:#9a9a9e"></div>
<div class="a" style="left:589px;top:175px;width:1px;height:1px;background:#9a9a9e"></div>
<div class="a" style="left:598px;top:174px;width:1px;height:2px;background:#8a8a8e"></div>
<div class="a" style="left:606px;top:175px;width:1px;height:1px;background:#9a9a9e"></div>
<div class="a" style="left:614px;top:175px;width:1px;height:1px;background:#9a9a9e"></div>
<div class="a" style="left:622px;top:175px;width:1px;height:1px;background:#9a9a9e"></div>
<div class="a" style="left:630px;top:175px;width:1px;height:1px;background:#9a9a9e"></div>
<div class="a" style="left:638px;top:170px;width:1px;height:6px;background:#707074"></div>
<div class="t" style="left:608px;width:60px;text-align:center;top:159px;font-size:11px;color:#8a8a8e;letter-spacing:-0.3px">100</div>
<div class="a" style="left:646px;top:175px;width:1px;height:1px;background:#9a9a9e"></div>
<div class="a" style="left:654px;top:175px;width:1px;height:1px;background:#9a9a9e"></div>
<div class="a" style="left:663px;top:175px;width:1px;height:1px;background:#9a9a9e"></div>
<div class="a" style="left:671px;top:175px;width:1px;height:1px;background:#9a9a9e"></div>
<div class="a" style="left:679px;top:174px;width:1px;height:2px;background:#8a8a8e"></div>
<div class="a" style="left:687px;top:175px;width:1px;height:1px;background:#9a9a9e"></div>
<div class="a" style="left:695px;top:175px;width:1px;height:1px;background:#9a9a9e"></div>
<div class="a" style="left:703px;top:175px;width:1px;height:1px;background:#9a9a9e"></div>
<div class="a" style="left:711px;top:175px;width:1px;height:1px;background:#9a9a9e"></div>
<div class="a" style="left:719px;top:170px;width:1px;height:6px;background:#707074"></div>
<div class="t" style="left:689px;width:60px;text-align:center;top:159px;font-size:11px;color:#8a8a8e;letter-spacing:-0.3px">150</div>
<div class="a" style="left:728px;top:175px;width:1px;height:1px;background:#9a9a9e"></div>
<div class="a" style="left:736px;top:175px;width:1px;height:1px;background:#9a9a9e"></div>
<div class="a" style="left:744px;top:175px;width:1px;height:1px;background:#9a9a9e"></div>
<div class="a" style="left:752px;top:175px;width:1px;height:1px;background:#9a9a9e"></div>
<div class="a" style="left:760px;top:174px;width:1px;height:2px;background:#8a8a8e"></div>
<div class="a" style="left:768px;top:175px;width:1px;height:1px;background:#9a9a9e"></div>
<div class="a" style="left:776px;top:175px;width:1px;height:1px;background:#9a9a9e"></div>
<div class="a" style="left:784px;top:175px;width:1px;height:1px;background:#9a9a9e"></div>
<div class="a" style="left:792px;top:175px;width:1px;height:1px;background:#9a9a9e"></div>
<div class="a" style="left:801px;top:170px;width:1px;height:6px;background:#707074"></div>
<div class="t" style="left:771px;width:60px;text-align:center;top:159px;font-size:11px;color:#8a8a8e;letter-spacing:-0.3px">200</div>
<div class="a" style="left:809px;top:175px;width:1px;height:1px;background:#9a9a9e"></div>
<div class="a" style="left:817px;top:175px;width:1px;height:1px;background:#9a9a9e"></div>
<div class="a" style="left:825px;top:175px;width:1px;height:1px;background:#9a9a9e"></div>
<div class="a" style="left:833px;top:175px;width:1px;height:1px;background:#9a9a9e"></div>
<div class="a" style="left:841px;top:174px;width:1px;height:2px;background:#8a8a8e"></div>
<div class="a" style="left:849px;top:175px;width:1px;height:1px;background:#9a9a9e"></div>
<div class="a" style="left:857px;top:175px;width:1px;height:1px;background:#9a9a9e"></div>
<div class="a" style="left:866px;top:175px;width:1px;height:1px;background:#9a9a9e"></div>
<div class="a" style="left:874px;top:175px;width:1px;height:1px;background:#9a9a9e"></div>
<div class="a" style="left:882px;top:170px;width:1px;height:6px;background:#707074"></div>
<div class="t" style="left:852px;width:60px;text-align:center;top:159px;font-size:11px;color:#8a8a8e;letter-spacing:-0.3px">250</div>
<div class="a" style="left:890px;top:175px;width:1px;height:1px;background:#9a9a9e"></div>
<div class="a" style="left:898px;top:175px;width:1px;height:1px;background:#9a9a9e"></div>
<div class="a" style="left:906px;top:175px;width:1px;height:1px;background:#9a9a9e"></div>
<div class="a" style="left:914px;top:175px;width:1px;height:1px;background:#9a9a9e"></div>
<div class="a" style="left:922px;top:174px;width:1px;height:2px;background:#8a8a8e"></div>
<div class="a" style="left:931px;top:175px;width:1px;height:1px;background:#9a9a9e"></div>
<div class="a" style="left:939px;top:175px;width:1px;height:1px;background:#9a9a9e"></div>
<div class="a" style="left:947px;top:175px;width:1px;height:1px;background:#9a9a9e"></div>
<div class="a" style="left:955px;top:175px;width:1px;height:1px;background:#9a9a9e"></div>
<div class="a" style="left:963px;top:170px;width:1px;height:6px;background:#707074"></div>
<div class="t" style="left:933px;width:60px;text-align:center;top:159px;font-size:11px;color:#8a8a8e;letter-spacing:-0.3px">300</div>
<div class="a" style="left:971px;top:175px;width:1px;height:1px;background:#9a9a9e"></div>
<div class="a" style="left:979px;top:175px;width:1px;height:1px;background:#9a9a9e"></div>
<div class="a" style="left:987px;top:175px;width:1px;height:1px;background:#9a9a9e"></div>
<div class="a" style="left:995px;top:175px;width:1px;height:1px;background:#9a9a9e"></div>
<div class="a" style="left:1004px;top:174px;width:1px;height:2px;background:#8a8a8e"></div>
<div class="a" style="left:1012px;top:175px;width:1px;height:1px;background:#9a9a9e"></div>
<div class="a" style="left:1020px;top:175px;width:1px;height:1px;background:#9a9a9e"></div>
<div class="a" style="left:1028px;top:175px;width:1px;height:1px;background:#9a9a9e"></div>
<div class="a" style="left:1036px;top:175px;width:1px;height:1px;background:#9a9a9e"></div>
<div class="a" style="left:1044px;top:170px;width:1px;height:6px;background:#707074"></div>
<div class="t" style="left:1014px;width:60px;text-align:center;top:159px;font-size:11px;color:#8a8a8e;letter-spacing:-0.3px">350</div>
<div class="a" style="left:1052px;top:175px;width:1px;height:1px;background:#9a9a9e"></div>
<div class="a" style="left:1060px;top:175px;width:1px;height:1px;background:#9a9a9e"></div>
<div class="a" style="left:1069px;top:175px;width:1px;height:1px;background:#9a9a9e"></div>
<div class="a" style="left:1077px;top:175px;width:1px;height:1px;background:#9a9a9e"></div>
<div class="a" style="left:1085px;top:174px;width:1px;height:2px;background:#8a8a8e"></div>
<div class="a" style="left:1093px;top:175px;width:1px;height:1px;background:#9a9a9e"></div>
<div class="a" style="left:1101px;top:175px;width:1px;height:1px;background:#9a9a9e"></div>
<div class="a" style="left:1109px;top:175px;width:1px;height:1px;background:#9a9a9e"></div>
<div class="a" style="left:1117px;top:175px;width:1px;height:1px;background:#9a9a9e"></div>
<div class="a" style="left:1125px;top:170px;width:1px;height:6px;background:#707074"></div>
<div class="t" style="left:1095px;width:60px;text-align:center;top:159px;font-size:11px;color:#8a8a8e;letter-spacing:-0.3px">400</div>
<div class="a" style="left:1134px;top:175px;width:1px;height:1px;background:#9a9a9e"></div>
<div class="a" style="left:1142px;top:175px;width:1px;height:1px;background:#9a9a9e"></div>
<div class="a" style="left:1150px;top:175px;width:1px;height:1px;background:#9a9a9e"></div>
<div class="a" style="left:1158px;top:175px;width:1px;height:1px;background:#9a9a9e"></div>
<div class="a" style="left:1166px;top:174px;width:1px;height:2px;background:#8a8a8e"></div>
<div class="a" style="left:1174px;top:175px;width:1px;height:1px;background:#9a9a9e"></div>
<div class="a" style="left:1182px;top:175px;width:1px;height:1px;background:#9a9a9e"></div>
<div class="a" style="left:1190px;top:175px;width:1px;height:1px;background:#9a9a9e"></div>
<div class="a" style="left:1198px;top:175px;width:1px;height:1px;background:#9a9a9e"></div>
<div class="a" style="left:1207px;top:170px;width:1px;height:6px;background:#707074"></div>
<div class="a" style="left:1215px;top:175px;width:1px;height:1px;background:#9a9a9e"></div>
<div class="a" style="left:1223px;top:175px;width:1px;height:1px;background:#9a9a9e"></div>
<div class="a" style="left:1231px;top:175px;width:1px;height:1px;background:#9a9a9e"></div>
<div class="a" style="left:1239px;top:175px;width:1px;height:1px;background:#9a9a9e"></div>
<div class="a" style="left:1247px;top:174px;width:1px;height:2px;background:#8a8a8e"></div>
<div class="t" style="left:1196px;top:159px;font-size:11px;color:#8a8a8e;letter-spacing:0.1px">millimeters</div>
<div class="a" style="left:54px;top:787px;width:1px;height:1px;background:#9a9a9e"></div>
<div class="a" style="left:54px;top:779px;width:1px;height:1px;background:#9a9a9e"></div>
<div class="a" style="left:54px;top:771px;width:1px;height:1px;background:#9a9a9e"></div>
<div class="a" style="left:53px;top:763px;width:2px;height:1px;background:#8a8a8e"></div>
<div class="a" style="left:54px;top:755px;width:1px;height:1px;background:#9a9a9e"></div>
<div class="a" style="left:54px;top:747px;width:1px;height:1px;background:#9a9a9e"></div>
<div class="a" style="left:54px;top:739px;width:1px;height:1px;background:#9a9a9e"></div>
<div class="a" style="left:54px;top:730px;width:1px;height:1px;background:#9a9a9e"></div>
<div class="a" style="left:49px;top:722px;width:6px;height:1px;background:#707074"></div>
<div class="t" style="left:14px;top:715px;width:60px;height:11px;text-align:center;font-size:11px;color:#8a8a8e;letter-spacing:-0.3px;transform:rotate(-90deg)">0</div>
<div class="a" style="left:54px;top:714px;width:1px;height:1px;background:#9a9a9e"></div>
<div class="a" style="left:54px;top:706px;width:1px;height:1px;background:#9a9a9e"></div>
<div class="a" style="left:54px;top:698px;width:1px;height:1px;background:#9a9a9e"></div>
<div class="a" style="left:54px;top:690px;width:1px;height:1px;background:#9a9a9e"></div>
<div class="a" style="left:53px;top:682px;width:2px;height:1px;background:#8a8a8e"></div>
<div class="a" style="left:54px;top:674px;width:1px;height:1px;background:#9a9a9e"></div>
<div class="a" style="left:54px;top:665px;width:1px;height:1px;background:#9a9a9e"></div>
<div class="a" style="left:54px;top:657px;width:1px;height:1px;background:#9a9a9e"></div>
<div class="a" style="left:54px;top:649px;width:1px;height:1px;background:#9a9a9e"></div>
<div class="a" style="left:49px;top:641px;width:6px;height:1px;background:#707074"></div>
<div class="t" style="left:14px;top:634px;width:60px;height:11px;text-align:center;font-size:11px;color:#8a8a8e;letter-spacing:-0.3px;transform:rotate(-90deg)">50</div>
<div class="a" style="left:54px;top:633px;width:1px;height:1px;background:#9a9a9e"></div>
<div class="a" style="left:54px;top:625px;width:1px;height:1px;background:#9a9a9e"></div>
<div class="a" style="left:54px;top:617px;width:1px;height:1px;background:#9a9a9e"></div>
<div class="a" style="left:54px;top:609px;width:1px;height:1px;background:#9a9a9e"></div>
<div class="a" style="left:53px;top:600px;width:2px;height:1px;background:#8a8a8e"></div>
<div class="a" style="left:54px;top:592px;width:1px;height:1px;background:#9a9a9e"></div>
<div class="a" style="left:54px;top:584px;width:1px;height:1px;background:#9a9a9e"></div>
<div class="a" style="left:54px;top:576px;width:1px;height:1px;background:#9a9a9e"></div>
<div class="a" style="left:54px;top:568px;width:1px;height:1px;background:#9a9a9e"></div>
<div class="a" style="left:49px;top:560px;width:6px;height:1px;background:#707074"></div>
<div class="t" style="left:14px;top:553px;width:60px;height:11px;text-align:center;font-size:11px;color:#8a8a8e;letter-spacing:-0.3px;transform:rotate(-90deg)">100</div>
<div class="a" style="left:54px;top:552px;width:1px;height:1px;background:#9a9a9e"></div>
<div class="a" style="left:54px;top:544px;width:1px;height:1px;background:#9a9a9e"></div>
<div class="a" style="left:54px;top:536px;width:1px;height:1px;background:#9a9a9e"></div>
<div class="a" style="left:54px;top:527px;width:1px;height:1px;background:#9a9a9e"></div>
<div class="a" style="left:53px;top:519px;width:2px;height:1px;background:#8a8a8e"></div>
<div class="a" style="left:54px;top:511px;width:1px;height:1px;background:#9a9a9e"></div>
<div class="a" style="left:54px;top:503px;width:1px;height:1px;background:#9a9a9e"></div>
<div class="a" style="left:54px;top:495px;width:1px;height:1px;background:#9a9a9e"></div>
<div class="a" style="left:54px;top:487px;width:1px;height:1px;background:#9a9a9e"></div>
<div class="a" style="left:49px;top:479px;width:6px;height:1px;background:#707074"></div>
<div class="t" style="left:14px;top:472px;width:60px;height:11px;text-align:center;font-size:11px;color:#8a8a8e;letter-spacing:-0.3px;transform:rotate(-90deg)">150</div>
<div class="a" style="left:54px;top:471px;width:1px;height:1px;background:#9a9a9e"></div>
<div class="a" style="left:54px;top:462px;width:1px;height:1px;background:#9a9a9e"></div>
<div class="a" style="left:54px;top:454px;width:1px;height:1px;background:#9a9a9e"></div>
<div class="a" style="left:54px;top:446px;width:1px;height:1px;background:#9a9a9e"></div>
<div class="a" style="left:53px;top:438px;width:2px;height:1px;background:#8a8a8e"></div>
<div class="a" style="left:54px;top:430px;width:1px;height:1px;background:#9a9a9e"></div>
<div class="a" style="left:54px;top:422px;width:1px;height:1px;background:#9a9a9e"></div>
<div class="a" style="left:54px;top:414px;width:1px;height:1px;background:#9a9a9e"></div>
<div class="a" style="left:54px;top:406px;width:1px;height:1px;background:#9a9a9e"></div>
<div class="a" style="left:49px;top:397px;width:6px;height:1px;background:#707074"></div>
<div class="t" style="left:14px;top:390px;width:60px;height:11px;text-align:center;font-size:11px;color:#8a8a8e;letter-spacing:-0.3px;transform:rotate(-90deg)">200</div>
<div class="a" style="left:54px;top:389px;width:1px;height:1px;background:#9a9a9e"></div>
<div class="a" style="left:54px;top:381px;width:1px;height:1px;background:#9a9a9e"></div>
<div class="a" style="left:54px;top:373px;width:1px;height:1px;background:#9a9a9e"></div>
<div class="a" style="left:54px;top:365px;width:1px;height:1px;background:#9a9a9e"></div>
<div class="a" style="left:53px;top:357px;width:2px;height:1px;background:#8a8a8e"></div>
<div class="a" style="left:54px;top:349px;width:1px;height:1px;background:#9a9a9e"></div>
<div class="a" style="left:54px;top:341px;width:1px;height:1px;background:#9a9a9e"></div>
<div class="a" style="left:54px;top:333px;width:1px;height:1px;background:#9a9a9e"></div>
<div class="a" style="left:54px;top:324px;width:1px;height:1px;background:#9a9a9e"></div>
<div class="a" style="left:49px;top:316px;width:6px;height:1px;background:#707074"></div>
<div class="t" style="left:14px;top:309px;width:60px;height:11px;text-align:center;font-size:11px;color:#8a8a8e;letter-spacing:-0.3px;transform:rotate(-90deg)">250</div>
<div class="a" style="left:54px;top:308px;width:1px;height:1px;background:#9a9a9e"></div>
<div class="a" style="left:54px;top:300px;width:1px;height:1px;background:#9a9a9e"></div>
<div class="a" style="left:54px;top:292px;width:1px;height:1px;background:#9a9a9e"></div>
<div class="a" style="left:54px;top:284px;width:1px;height:1px;background:#9a9a9e"></div>
<div class="a" style="left:53px;top:276px;width:2px;height:1px;background:#8a8a8e"></div>
<div class="a" style="left:54px;top:268px;width:1px;height:1px;background:#9a9a9e"></div>
<div class="a" style="left:54px;top:259px;width:1px;height:1px;background:#9a9a9e"></div>
<div class="a" style="left:54px;top:251px;width:1px;height:1px;background:#9a9a9e"></div>
<div class="a" style="left:54px;top:243px;width:1px;height:1px;background:#9a9a9e"></div>
<div class="a" style="left:49px;top:235px;width:6px;height:1px;background:#707074"></div>
<div class="t" style="left:14px;top:228px;width:60px;height:11px;text-align:center;font-size:11px;color:#8a8a8e;letter-spacing:-0.3px;transform:rotate(-90deg)">300</div>
<div class="a" style="left:54px;top:227px;width:1px;height:1px;background:#9a9a9e"></div>
<div class="a" style="left:54px;top:219px;width:1px;height:1px;background:#9a9a9e"></div>
<div class="a" style="left:54px;top:211px;width:1px;height:1px;background:#9a9a9e"></div>
<div class="a" style="left:54px;top:203px;width:1px;height:1px;background:#9a9a9e"></div>
<div class="a" style="left:53px;top:194px;width:2px;height:1px;background:#8a8a8e"></div>
<div class="a" style="left:54px;top:186px;width:1px;height:1px;background:#9a9a9e"></div>
<div class="t" style="left:14px;top:766px;width:60px;height:11px;text-align:center;font-size:11px;color:#8a8a8e;transform:rotate(-90deg)">millimeters</div>
<svg style="left:41px;top:161px" width="13" height="12" viewBox="0 0 13 12"><path d="M1 1 h2 M5 1 h2 M9 1 h2 M1 4 v2 M1 8 v2" stroke="#222" stroke-width="1.2"/><path d="M3 3 L10 10 M10 10 V6 M10 10 H6" stroke="#222" stroke-width="1.3" fill="none"/></svg>
<div class="a" style="left:1234px;top:179px;width:19px;height:20px;background:#f0f0f2"></div>
<svg style="left:1238px;top:185px" width="11" height="7" viewBox="0 0 11 7"><path d="M1 6 L5.5 1.5 L10 6" fill="none" stroke="#333" stroke-width="1.8"/></svg>
<div class="a" style="left:1234px;top:323px;width:18px;height:312px;background:#c8c8ca"></div>
<div class="a" style="left:1234px;top:760px;width:19px;height:20px;background:#f0f0f2"></div>
<svg style="left:1238px;top:767px" width="11" height="7" viewBox="0 0 11 7"><path d="M1 1 L5.5 5.5 L10 1" fill="none" stroke="#333" stroke-width="1.8"/></svg><div class="a" style="left:1259px;top:131px;width:318px;height:24px;background:#e8e8ea"></div>
<div class="a" style="left:1259px;top:154px;width:318px;height:1px;background:#c4c4c8"></div>
<div class="a" style="left:1254px;top:131px;width:5px;height:672px;background:#f8f8fa"></div>
<div class="a" style="left:1257px;top:131px;width:1px;height:672px;background:#dcdce0"></div>
<div class="t" style="left:1263px;top:137px;font-size:14px;color:#1e1e1e">Object Manager</div>
<svg style="left:1542px;top:139px" width="10" height="9" viewBox="0 0 10 9"><path d="M0 0 L4.5 4.5 L0 9 Z M5 0 L9.5 4.5 L5 9 Z" fill="#b4b4b8"/></svg>
<svg style="left:1562px;top:138px" width="9" height="9" viewBox="0 0 9 9"><path d="M0.5 0.5 L8.5 8.5 M8.5 0.5 L0.5 8.5" stroke="#aaa" stroke-width="1.3"/></svg>
<div class="a" style="left:1258px;top:155px;width:296px;height:648px;background:#f2f2f4"></div>
<div class="a" style="left:1554px;top:155px;width:1px;height:648px;background:#d0d0d4"></div>
<div class="a" style="left:1265px;top:165px;width:27px;height:27px;background:#fff;border:1px solid #b8b8bc"></div>
<svg style="left:1268px;top:168px" width="21" height="20" viewBox="0 0 21 20"><path d="M1 2 L3 4 L6 1 M1 8.5 L3 10.5 L6 7.5 M1 15 L3 17 L6 14" fill="none" stroke="#4aa03a" stroke-width="1.8"/><path d="M9 5 L13 1 H20 L16 5 Z M9 11 L13 7 H20 L16 11 Z M7 18 L11 14 H18 L14 18 Z" fill="#d4dcf0" stroke="#7a7a9a" stroke-width=".9"/></svg>
<div class="a" style="left:1297px;top:165px;width:27px;height:27px;background:#fff;border:1px solid #b8b8bc"></div>
<svg style="left:1300px;top:168px" width="21" height="20" viewBox="0 0 21 20"><path d="M1 5 H12 L16 9 H5 Z M1 9 H12 L16 13 H5 Z M1 13 H12 L16 17 H5 Z" fill="#e0e4f0" stroke="#6a6a8a" stroke-width=".9"/><path d="M15 1 L19 5 L15 9 L11 5 Z" fill="#111"/><path d="M8 12 L12 8" stroke="#333" stroke-width="1.2"/></svg>
<svg style="left:1334px;top:168px" width="21" height="23" viewBox="0 0 21 23"><path d="M1 1 V18 M3 3 V18" stroke="#b0b0c0" stroke-width=".8" stroke-dasharray="1.5 1"/><path d="M5 8 L10 3 H17 L12 8 Z M5 12 L10 7 H17 L12 12 Z M5 16 L10 11 H17 L12 16 Z" fill="#d8dcec" stroke="#8a8aa0" stroke-width=".9"/><path d="M21 16 V22 H15 Z" fill="#111"/></svg>
<div class="t" style="left:1374px;top:163px;font-size:13px;color:#1e1e1e">Page 1</div>
<div class="t" style="left:1374px;top:181px;font-size:13px;color:#1e1e1e">Layer 1</div>
<svg style="left:1531px;top:166px" width="6" height="10" viewBox="0 0 6 10"><path d="M0 0 V10 L6 5 Z" fill="#111"/></svg>
<div class="a" style="left:1264px;top:199px;width:283px;height:562px;background:#fff;border:1px solid #8c8c90;border-top:2px solid #7a7a7e"></div>
<div class="a" style="left:1265px;top:200px;width:281px;height:21px;background:#d5e4f3"></div>
<svg style="left:1273px;top:203px" width="13" height="13" viewBox="0 0 13 13"><rect x="0.75" y="0.75" width="11.5" height="11.5" fill="none" stroke="#2a2a40" stroke-width="1.5"/><path d="M3.5 6.5 H9.5" stroke="#2a2a40" stroke-width="1.4"/></svg>
<svg style="left:1294px;top:201px" width="15" height="18" viewBox="0 0 15 18"><path d="M3.5 0.7 H13.7 V16.3 C13.7 17 13 17.3 12 17.3 H2 C1 17.3 0.7 17 0.7 16.3 V3.5 Z" fill="#d8ece8" stroke="#3a4a5a" stroke-width="1.2"/></svg>
<div class="t" style="left:1314px;top:203px;font-size:14px;font-weight:bold;color:#111;letter-spacing:-0.3px">Page 1</div>
<div class="a" style="left:1265px;top:221px;width:281px;height:1px;background:#d8d8dc"></div>
<div class="a" style="left:1265px;top:222px;width:281px;height:20px;background:#fff"></div>
<svg style="left:1315px;top:226px" width="15" height="10" viewBox="0 0 15 10"><path d="M0.5 5 C3 0.5 12 0.5 14.5 5 C12 9.5 3 9.5 0.5 5 Z" fill="#e4e4ec" stroke="#6a6a78"/><circle cx="8" cy="4.5" r="2.8" fill="#2a2a40"/><circle cx="7" cy="3.5" r="1" fill="#fff"/></svg>
<svg style="left:1334px;top:223px" width="16" height="15" viewBox="0 0 16 15"><path d="M0.5 14.5 V8.5 H15.5 V14.5 Z" fill="#e8e8ec" stroke="#b8b8c0"/><circle cx="7.5" cy="6.5" r="5.2" fill="none" stroke="#c01020" stroke-width="1.9"/><path d="M4 10 L11 3" stroke="#c01020" stroke-width="1.9"/></svg>
<svg style="left:1352px;top:223px" width="15" height="15" viewBox="0 0 15 15"><path d="M1 14 L2.5 9.5 L10 2 C11 1 12.5 1 13.5 2 C14.3 3 14.3 4 13.3 5 L5.5 12.5 Z" fill="#50506a"/><path d="M1.5 13.5 L2.5 10.5 L4.5 12.5 Z" fill="#fff"/></svg>
<div class="a" style="left:1368px;top:224px;width:17px;height:14px;background:#0a4aa0"></div>
<div class="t" style="left:1394px;top:224px;font-size:14px;font-style:italic;font-weight:normal;color:#3a3a3a;letter-spacing:-0.2px">Guides</div>
<div class="a" style="left:1265px;top:243px;width:281px;height:1px;background:#d8d8dc"></div>
<div class="a" style="left:1265px;top:244px;width:281px;height:20px;background:#fff"></div>
<svg style="left:1315px;top:248px" width="15" height="10" viewBox="0 0 15 10"><path d="M0.5 5 C3 0.5 12 0.5 14.5 5 C12 9.5 3 9.5 0.5 5 Z" fill="#e4e4ec" stroke="#6a6a78"/><circle cx="8" cy="4.5" r="2.8" fill="#2a2a40"/><circle cx="7" cy="3.5" r="1" fill="#fff"/></svg>
<svg style="left:1334px;top:246px" width="16" height="14" viewBox="0 0 16 14"><rect x="4" y="0.5" width="8" height="6" fill="#fff" stroke="#aaa"/><path d="M0.5 13.5 V6.5 H15.5 V13.5 Z" fill="#e4e4e8" stroke="#888"/><rect x="2" y="7" width="12" height="1.8" fill="#222"/></svg>
<svg style="left:1352px;top:245px" width="15" height="15" viewBox="0 0 15 15"><path d="M1 14 L2.5 9.5 L10 2 C11 1 12.5 1 13.5 2 C14.3 3 14.3 4 13.3 5 L5.5 12.5 Z" fill="#50506a"/><path d="M1.5 13.5 L2.5 10.5 L4.5 12.5 Z" fill="#fff"/></svg>
<div class="a" style="left:1368px;top:246px;width:17px;height:14px;background:#140808"></div>
<div class="t" style="left:1394px;top:246px;font-size:14px;font-style:normal;font-weight:bold;color:#e0141c;letter-spacing:-0.2px">Layer 1</div>
<div class="a" style="left:1265px;top:264px;width:281px;height:1px;background:#d8d8dc"></div>
<div class="a" style="left:1265px;top:265px;width:281px;height:20px;background:#d5e4f3"></div>
<svg style="left:1273px;top:268px" width="13" height="13" viewBox="0 0 13 13"><rect x="0.75" y="0.75" width="11.5" height="11.5" fill="none" stroke="#2a2a40" stroke-width="1.5"/><path d="M3.5 6.5 H9.5" stroke="#2a2a40" stroke-width="1.4"/></svg>
<svg style="left:1294px;top:266px" width="15" height="18" viewBox="0 0 15 18"><path d="M3.5 0.7 H13.7 V16.3 C13.7 17 13 17.3 12 17.3 H2 C1 17.3 0.7 17 0.7 16.3 V3.5 Z" fill="#d8ece8" stroke="#3a4a5a" stroke-width="1.2"/></svg>
<div class="t" style="left:1314px;top:268px;font-size:14px;font-weight:bold;color:#111;letter-spacing:-0.3px">Master Page</div>
<div class="a" style="left:1265px;top:285px;width:281px;height:1px;background:#d8d8dc"></div>
<div class="a" style="left:1265px;top:286px;width:281px;height:20px;background:#fff"></div>
<svg style="left:1315px;top:290px" width="15" height="10" viewBox="0 0 15 10"><path d="M0.5 5 C3 0.5 12 0.5 14.5 5 C12 9.5 3 9.5 0.5 5 Z" fill="#e4e4ec" stroke="#6a6a78"/><circle cx="8" cy="4.5" r="2.8" fill="#2a2a40"/><circle cx="7" cy="3.5" r="1" fill="#fff"/></svg>
<svg style="left:1334px;top:287px" width="16" height="15" viewBox="0 0 16 15"><path d="M0.5 14.5 V8.5 H15.5 V14.5 Z" fill="#e8e8ec" stroke="#b8b8c0"/><circle cx="7.5" cy="6.5" r="5.2" fill="none" stroke="#c01020" stroke-width="1.9"/><path d="M4 10 L11 3" stroke="#c01020" stroke-width="1.9"/></svg>
<svg style="left:1352px;top:287px" width="15" height="15" viewBox="0 0 15 15"><path d="M1 14 L2.5 9.5 L10 2 C11 1 12.5 1 13.5 2 C14.3 3 14.3 4 13.3 5 L5.5 12.5 Z" fill="#50506a"/><path d="M1.5 13.5 L2.5 10.5 L4.5 12.5 Z" fill="#fff"/></svg>
<div class="a" style="left:1368px;top:288px;width:17px;height:14px;background:#0a4aa0"></div>
<div class="t" style="left:1394px;top:288px;font-size:14px;font-style:italic;font-weight:normal;color:#3a5ea0;letter-spacing:-0.2px">Guides (all pages)</div>
<div class="a" style="left:1265px;top:306px;width:281px;height:1px;background:#d8d8dc"></div>
<div class="a" style="left:1265px;top:307px;width:281px;height:20px;background:#fff"></div>
<svg style="left:1315px;top:311px" width="15" height="10" viewBox="0 0 15 10"><path d="M0.5 5 C3 0.5 12 0.5 14.5 5 C12 9.5 3 9.5 0.5 5 Z" fill="#e4e4ec" stroke="#6a6a78"/><circle cx="8" cy="4.5" r="2.8" fill="#2a2a40"/><circle cx="7" cy="3.5" r="1" fill="#fff"/></svg>
<svg style="left:1334px;top:308px" width="16" height="15" viewBox="0 0 16 15"><path d="M0.5 14.5 V8.5 H15.5 V14.5 Z" fill="#e8e8ec" stroke="#b8b8c0"/><circle cx="7.5" cy="6.5" r="5.2" fill="none" stroke="#c01020" stroke-width="1.9"/><path d="M4 10 L11 3" stroke="#c01020" stroke-width="1.9"/></svg>
<svg style="left:1352px;top:308px" width="15" height="15" viewBox="0 0 15 15"><path d="M1 14 L2.5 9.5 L10 2 C11 1 12.5 1 13.5 2 C14.3 3 14.3 4 13.3 5 L5.5 12.5 Z" fill="#50506a"/><path d="M1.5 13.5 L2.5 10.5 L4.5 12.5 Z" fill="#fff"/></svg>
<div class="a" style="left:1368px;top:309px;width:17px;height:14px;background:#140808"></div>
<div class="t" style="left:1394px;top:309px;font-size:14px;font-style:italic;font-weight:normal;color:#3a5ea0;letter-spacing:-0.2px">Desktop</div>
<div class="a" style="left:1265px;top:327px;width:281px;height:1px;background:#d8d8dc"></div>
<div class="a" style="left:1265px;top:328px;width:281px;height:20px;background:#fff"></div>
<svg style="left:1315px;top:333px" width="15" height="9" viewBox="0 0 15 9"><ellipse cx="7.5" cy="4.5" rx="7" ry="4" fill="#d4d4dc" stroke="#7a7a8a"/></svg>
<svg style="left:1334px;top:329px" width="16" height="15" viewBox="0 0 16 15"><path d="M0.5 14.5 V8.5 H15.5 V14.5 Z" fill="#e8e8ec" stroke="#b8b8c0"/><circle cx="7.5" cy="6.5" r="5.2" fill="none" stroke="#c01020" stroke-width="1.9"/><path d="M4 10 L11 3" stroke="#c01020" stroke-width="1.9"/></svg>
<svg style="left:1352px;top:329px" width="16" height="15" viewBox="0 0 16 15"><path d="M1 14 L3 10 L11 2 L14 5 L6 13 Z" fill="#6a6a80"/><circle cx="9" cy="6.5" r="5" fill="none" stroke="#c01020" stroke-width="1.9"/><path d="M5.5 10 L12.5 3" stroke="#c01020" stroke-width="1.9"/></svg>
<div class="a" style="left:1368px;top:330px;width:17px;height:14px;background:#c4c4c4"></div>
<div class="t" style="left:1394px;top:330px;font-size:14px;font-style:italic;font-weight:normal;color:#3a5ea0;letter-spacing:-0.2px">Document Grid</div>
<div class="a" style="left:1265px;top:348px;width:281px;height:1px;background:#d8d8dc"></div>
<svg style="left:1268px;top:770px" width="20" height="19" viewBox="0 0 20 19"><path d="M1 8 H11 L15 12 H5 Z M1 11.5 H11 L15 15.5 H5 Z M1 15 H11 L15 18.5 H5 Z" fill="#e0e4f0" stroke="#6a6a8a" stroke-width=".9"/><circle cx="14" cy="6" r="3.8" fill="#1a8a2a"/></svg>
<svg style="left:1300px;top:770px" width="20" height="19" viewBox="0 0 20 19"><text x="0" y="7" font-size="6" font-family="Liberation Sans" fill="#444">1</text><text x="0" y="13" font-size="6" font-family="Liberation Sans" fill="#444">2</text><text x="0" y="19" font-size="6" font-family="Liberation Sans" fill="#444">3</text><path d="M4 10 L9 5 H16 L11 10 Z M4 14 L9 9 H16 L11 14 Z M4 18 L9 13 H16 L11 18 Z" fill="#e0e4f0" stroke="#6a6a8a" stroke-width=".9"/><path d="M7 14 L12 8" stroke="#e07a20" stroke-width="2.4"/><circle cx="14" cy="5" r="3.8" fill="#1a8a2a"/></svg>
<svg style="left:1333px;top:770px" width="20" height="19" viewBox="0 0 20 19"><text x="0" y="7" font-size="6" font-family="Liberation Sans" fill="#444">1</text><text x="0" y="13" font-size="6" font-family="Liberation Sans" fill="#444">3</text><text x="0" y="19" font-size="6" font-family="Liberation Sans" fill="#444">5</text><path d="M4 10 L9 5 H16 L11 10 Z M4 14 L9 9 H16 L11 14 Z M4 18 L9 13 H16 L11 18 Z" fill="#e0e4f0" stroke="#6a6a8a" stroke-width=".9"/><path d="M7 14 L12 8" stroke="#e07a20" stroke-width="2.4"/><circle cx="14" cy="5" r="3.8" fill="#1a8a2a"/></svg>
<svg style="left:1366px;top:770px" width="20" height="19" viewBox="0 0 20 19"><path d="M4 10 L9 5 H16 L11 10 Z M4 14 L9 9 H16 L11 14 Z M4 18 L9 13 H16 L11 18 Z" fill="#e8e8ea" stroke="#c8c8cc" stroke-width=".9"/><path d="M1 4 V19" stroke="#d0d0d4" stroke-dasharray="2 2"/></svg>
<svg style="left:1518px;top:771px" width="15" height="18" viewBox="0 0 15 18"><rect x="0.5" y="2.5" width="14" height="2" fill="#d4d4d8"/><rect x="5" y="0.5" width="5" height="2" fill="none" stroke="#d4d4d8"/><path d="M1.5 5 L2.5 17.5 H12.5 L13.5 5 Z" fill="none" stroke="#d0d0d4" stroke-width="1.2"/><path d="M5 7 V15 M7.5 7 V15 M10 7 V15" stroke="#d0d0d4"/></svg>
<div class="a" style="left:1555px;top:155px;width:22px;height:648px;background:#e8e8ea"></div>
<div class="a" style="left:1555px;top:156px;width:22px;height:147px;background:#c8c8ca"></div>
<div class="a" style="left:1555px;top:303px;width:22px;height:149px;background:#e0e0e2;border-top:1px solid #f4f4f6"></div>
<div class="a" style="left:1555px;top:452px;width:22px;height:192px;background:#e0e0e2;border-top:1px solid #f4f4f6"></div>
<div class="a" style="left:1555px;top:644px;width:22px;height:30px;background:#d4d4d6;border-top:1px solid #f4f4f6"></div>
<svg style="left:1558px;top:160px" width="17" height="18" viewBox="0 0 17 18"><circle cx="2.5" cy="2.5" r="2" fill="none" stroke="#555"/><rect x="6" y="1" width="4" height="4" fill="#eee" stroke="#555"/><rect x="12" y="6" width="4" height="4" fill="#eee" stroke="#555"/><path d="M2.5 5 V17 M7 8 V17 M13 12 V17" stroke="#777" stroke-dasharray="1.5 1.5"/></svg>
<div class="t" style="left:1516px;top:226px;width:100px;height:16px;font-size:14px;color:#1e1e1e;transform:rotate(90deg);text-align:left">Object Manager</div>
<svg style="left:1557px;top:310px" width="18" height="19" viewBox="0 0 18 19"><path d="M10 1 V12 M6 5 H14 M10 1 L8.5 3 M10 1 L11.5 3 M6 5 L8 3.5 M6 5 L8 6.5 M14 5 L12 3.5 M14 5 L12 6.5" stroke="#333" stroke-width="1.1" fill="none"/><path d="M4 8 C1 11 2 17 8 17 C11 17 13 15 13 12" stroke="#333" stroke-width="1.5" fill="none"/></svg>
<div class="t" style="left:1516px;top:375px;width:100px;height:16px;font-size:14px;color:#1e1e1e;transform:rotate(90deg);text-align:left">Transformations</div>
<svg style="left:1558px;top:462px" width="16" height="17" viewBox="0 0 16 17"><path d="M0.7 16.3 V0.7 H8 C8 4 11 6 15.3 6 V16.3 Z" fill="#fff" stroke="#666" stroke-width="1.1"/><path d="M1 1 H8 C8 4 11 6 15 6 V8 H1 Z" fill="#dcdce4"/></svg>
<div class="t" style="left:1497px;top:546px;width:138px;height:16px;font-size:14px;color:#1e1e1e;transform:rotate(90deg);text-align:left">Fillet/Scallop/Chamfer</div>
<svg style="left:1557px;top:650px" width="18" height="19" viewBox="0 0 18 19"><path d="M7 5 H11 L16 18 H12.5 L11.5 15 H6.5 L5.5 18 H2 Z M7.5 12 H10.5 L9 7.5 Z" fill="#f4f4f8" stroke="#555" stroke-width="1.1" fill-rule="evenodd"/><path d="M1 2 H17 M1 2 L3 0.5 M1 2 L3 3.5 M17 2 L15 0.5 M17 2 L15 3.5" stroke="#333" fill="none"/></svg>
<svg style="left:1556px;top:695px" width="21" height="21" viewBox="0 0 21 21"><circle cx="10.5" cy="10.5" r="9" fill="none" stroke="#c8c8cc" stroke-width="1.4"/><path d="M10.5 4.5 V16.5 M4.5 10.5 H16.5" stroke="#c8c8cc" stroke-width="2"/></svg>
<div class="a" style="left:1577px;top:131px;width:1px;height:694px;background:#dcdce0"></div>
<div class="a" style="left:1578px;top:131px;width:21px;height:694px;background:#f2f2f4"></div>
<div class="a" style="left:1582px;top:138px;width:2px;height:1px;background:#aaa"></div>
<div class="a" style="left:1587px;top:138px;width:2px;height:1px;background:#aaa"></div>
<div class="a" style="left:1592px;top:138px;width:2px;height:1px;background:#aaa"></div>
<svg style="left:1585px;top:144px" width="7" height="11" viewBox="0 0 7 11"><path d="M0 0 V11 L7 5.5 Z" fill="#111"/></svg>
<svg style="left:1581px;top:160px" width="15" height="15" viewBox="0 0 15 15"><path d="M1 14 L8 7" stroke="#6a8a88" stroke-width="2.6" stroke-linecap="round"/><path d="M8 5 L11.5 1.5 C12.5 0.5 14 0.5 14.5 1.5 C15 2.5 14.5 3.5 13.5 4.5 L10 8 Z" fill="#1e1e30"/><path d="M7 5 L10 8" stroke="#1e1e30" stroke-width="1.8"/></svg>
<svg style="left:1584px;top:183px" width="10" height="6" viewBox="0 0 10 6"><path d="M1 5.5 L5 1.5 L9 5.5" fill="none" stroke="#d4d4d8" stroke-width="1.3"/></svg>
<svg style="left:1579px;top:195px" width="20" height="20" viewBox="0 0 20 20"><rect x="0.5" y="0.5" width="19" height="19" fill="#fff" stroke="#555"/><path d="M1 1 L19 19 M19 1 L1 19" stroke="#222" stroke-width="1.1"/></svg>
<div class="a" style="left:1579px;top:215px;width:20px;height:21px;background:#080404;border:1px solid #50505a"></div>
<div class="a" style="left:1579px;top:235px;width:20px;height:21px;background:#0a0606;border:1px solid #50505a"></div>
<div class="a" style="left:1579px;top:255px;width:20px;height:21px;background:#262424;border:1px solid #50505a"></div>
<div class="a" style="left:1579px;top:275px;width:20px;height:21px;background:#424040;border:1px solid #50505a"></div>
<div class="a" style="left:1579px;top:295px;width:20px;height:20px;background:#5e5c5c;border:1px solid #50505a"></div>
<div class="a" style="left:1579px;top:314px;width:20px;height:21px;background:#7a7878;border:1px solid #50505a"></div>
<div class="a" style="left:1579px;top:334px;width:20px;height:21px;background:#979595;border:1px solid #50505a"></div>
<div class="a" style="left:1579px;top:354px;width:20px;height:21px;background:#b1b0b0;border:1px solid #50505a"></div>
<div class="a" style="left:1579px;top:374px;width:20px;height:21px;background:#cbcaca;border:1px solid #50505a"></div>
<div class="a" style="left:1579px;top:394px;width:20px;height:21px;background:#e5e5e5;border:1px solid #50505a"></div>
<div class="a" style="left:1580px;top:415px;width:18px;height:19px;background:#fff;border:1px solid #555"></div>
<div class="a" style="left:1579px;top:434px;width:20px;height:21px;background:#0b4ea2;border:1px solid #50505a"></div>
<div class="a" style="left:1579px;top:454px;width:20px;height:21px;background:#59c3de;border:1px solid #50505a"></div>
<div class="a" style="left:1579px;top:474px;width:20px;height:20px;background:#52b13c;border:1px solid #50505a"></div>
<div class="a" style="left:1579px;top:493px;width:20px;height:21px;background:#f5e500;border:1px solid #50505a"></div>
<div class="a" style="left:1579px;top:513px;width:20px;height:21px;background:#e3061c;border:1px solid #50505a"></div>
<div class="a" style="left:1579px;top:533px;width:20px;height:21px;background:#a7509e;border:1px solid #50505a"></div>
<div class="a" style="left:1579px;top:553px;width:20px;height:21px;background:#6c3595;border:1px solid #50505a"></div>
<div class="a" style="left:1579px;top:573px;width:20px;height:21px;background:#ea6110;border:1px solid #50505a"></div>
<div class="a" style="left:1579px;top:593px;width:20px;height:21px;background:#ee9ac0;border:1px solid #50505a"></div>
<div class="a" style="left:1579px;top:613px;width:20px;height:21px;background:#6e2327;border:1px solid #50505a"></div>
<div class="a" style="left:1579px;top:633px;width:20px;height:21px;background:#cbcae8;border:1px solid #50505a"></div>
<div class="a" style="left:1579px;top:653px;width:20px;height:21px;background:#9b9ad2;border:1px solid #50505a"></div>
<div class="a" style="left:1579px;top:673px;width:20px;height:20px;background:#6b97d6;border:1px solid #50505a"></div>
<div class="a" style="left:1579px;top:692px;width:20px;height:21px;background:#5560b2;border:1px solid #50505a"></div>
<div class="a" style="left:1579px;top:712px;width:20px;height:21px;background:#5d57aa;border:1px solid #50505a"></div>
<div class="a" style="left:1579px;top:732px;width:20px;height:21px;background:#123e8c;border:1px solid #50505a"></div>
<div class="a" style="left:1579px;top:752px;width:20px;height:21px;background:#0c1a44;border:1px solid #50505a"></div>
<div class="a" style="left:1579px;top:772px;width:20px;height:8px;background:#2468a8;border:1px solid #50505a"></div>
<svg style="left:1584px;top:785px" width="10" height="6" viewBox="0 0 10 6"><path d="M1 0.5 L5 4.5 L9 0.5" fill="none" stroke="#b8b8bc" stroke-width="1.3"/></svg>
<svg style="left:1584px;top:803px" width="10" height="9" viewBox="0 0 10 9"><path d="M1 1 L4.5 4.5 L1 8 M5.5 1 L9 4.5 L5.5 8" fill="none" stroke="#b8b8bc" stroke-width="1.2"/></svg><!-- ===== PAGE NAV ===== -->
<svg style="left:60px;top:783px" width="13" height="15" viewBox="0 0 13 15"><path d="M0.7 0.7 H7.5 L11.3 4.5 V14.3 H0.7 Z" fill="#fff" stroke="#222" stroke-width="1.3"/><path d="M6 6 V12 M3 9 H9" stroke="#222" stroke-width="1.3"/></svg>
<svg style="left:82px;top:787px" width="9" height="11" viewBox="0 0 9 11"><rect x="0" y="0" width="1.6" height="11" fill="#666"/><path d="M9 0 V11 L2.5 5.5 Z" fill="#777"/></svg>
<svg style="left:104px;top:787px" width="7" height="11" viewBox="0 0 7 11"><path d="M7 0 V11 L0 5.5 Z" fill="#777"/></svg>
<div class="t" style="left:135px;top:786px;font-size:14px;color:#222;letter-spacing:-0.3px">1 of 1</div>
<svg style="left:195px;top:787px" width="7" height="11" viewBox="0 0 7 11"><path d="M0 0 V11 L7 5.5 Z" fill="#777"/></svg>
<svg style="left:213px;top:787px" width="9" height="11" viewBox="0 0 9 11"><path d="M0 0 V11 L6.5 5.5 Z" fill="#777"/><rect x="7.4" y="0" width="1.6" height="11" fill="#666"/></svg>
<svg style="left:231px;top:783px" width="13" height="15" viewBox="0 0 13 15"><path d="M0.7 0.7 H7.5 L11.3 4.5 V14.3 H0.7 Z" fill="#fff" stroke="#222" stroke-width="1.3"/><path d="M6 6 V12 M3 9 H9" stroke="#222" stroke-width="1.3"/></svg>
<svg style="left:248px;top:782px" width="80" height="21" viewBox="0 0 80 21"><path d="M0.5 21 V0 H70 L78.5 8 V21" fill="#fff" stroke="#c4c4c8"/></svg>
<div class="t" style="left:266px;top:785px;font-size:14px;color:#222;letter-spacing:-0.5px">Page 1</div>
<!-- horizontal scrollbar -->
<div class="a" style="left:657px;top:782px;width:596px;height:21px;background:#f2f2f4"></div>
<div class="a" style="left:656px;top:782px;width:1px;height:21px;background:#a0a0a4"></div>
<div class="a" style="left:651px;top:786px;width:1px;height:2px;background:#aaa"></div>
<div class="a" style="left:651px;top:790px;width:1px;height:2px;background:#aaa"></div>
<div class="a" style="left:651px;top:794px;width:1px;height:2px;background:#aaa"></div>
<svg style="left:663px;top:786px" width="7" height="11" viewBox="0 0 7 11"><path d="M6 1 L1.5 5.5 L6 10" fill="none" stroke="#333" stroke-width="1.8"/></svg>
<div class="a" style="left:679px;top:783px;width:533px;height:17px;background:#c8c8ca"></div>
<svg style="left:1218px;top:786px" width="7" height="11" viewBox="0 0 7 11"><path d="M1 1 L5.5 5.5 L1 10" fill="none" stroke="#333" stroke-width="1.8"/></svg>
<svg style="left:1236px;top:785px" width="15" height="15" viewBox="0 0 15 15"><circle cx="6" cy="6" r="5" fill="#fff" stroke="#333" stroke-width="1.3"/><circle cx="6" cy="6" r="2" fill="none" stroke="#333"/><path d="M6 2 V10 M2 6 H10" stroke="#333" stroke-width=".8"/><path d="M9.5 9.5 L14 14" stroke="#222" stroke-width="2"/></svg>
<!-- ===== PALETTE ROW ===== -->
<div class="a" style="left:40px;top:807px;width:1px;height:2px;background:#999"></div>
<div class="a" style="left:40px;top:812px;width:1px;height:2px;background:#999"></div>
<div class="a" style="left:40px;top:817px;width:1px;height:2px;background:#999"></div>
<svg style="left:48px;top:808px" width="7" height="11" viewBox="0 0 7 11"><path d="M0 0 V11 L6.5 5.5 Z" fill="#111"/></svg>
<svg style="left:63px;top:806px" width="15" height="15" viewBox="0 0 15 15"><path d="M1 14 L8 7" stroke="#6a8a88" stroke-width="2.6" stroke-linecap="round"/><path d="M8 5 L11.5 1.5 C12.5 0.5 14 0.5 14.5 1.5 C15 2.5 14.5 3.5 13.5 4.5 L10 8 Z" fill="#1e1e30"/><path d="M7 5 L10 8" stroke="#1e1e30" stroke-width="1.8"/></svg>
<svg style="left:84px;top:809px" width="6" height="10" viewBox="0 0 6 10"><path d="M5 1 L1 5 L5 9" fill="none" stroke="#ccc" stroke-width="1.4"/></svg>
<svg style="left:97px;top:804px" width="22" height="21" viewBox="0 0 22 21"><rect x="0.7" y="0.7" width="20.6" height="19.6" fill="#fff" stroke="#555" stroke-width="1.3"/><path d="M1 1 L21 20 M21 1 L1 20" stroke="#222" stroke-width="1.1"/></svg>
<div class="t" style="left:624px;top:806px;font-size:14px;font-style:italic;color:#a4a4a8;letter-spacing:-0.13px">Drag colors (or objects) here to store these colors with your document</div>
<svg style="left:1538px;top:808px" width="7" height="11" viewBox="0 0 7 11"><path d="M1 1 L5.5 5.5 L1 10" fill="none" stroke="#c4c4c8" stroke-width="1.4"/></svg>
<svg style="left:1556px;top:809px" width="10" height="9" viewBox="0 0 10 9"><path d="M1 1 L4.5 4.5 L1 8 M5.5 1 L9 4.5 L5.5 8" fill="none" stroke="#b8b8bc" stroke-width="1.2"/></svg>
<!-- ===== STATUS BAR ===== -->
<div class="t" style="left:7px;top:838px;font-size:14px;color:#222;letter-spacing:-0.6px">( -254,356; 134,443 )</div>
<svg style="left:137px;top:836px" width="17" height="17" viewBox="0 0 17 17"><rect x="0.75" y="0.75" width="15.5" height="15.5" fill="#fff" stroke="#111" stroke-width="1.5"/><path d="M5.5 3.5 V13.5 L12 8.5 Z" fill="#111"/></svg>
<svg style="left:1068px;top:836px" width="18" height="16" viewBox="0 0 18 16"><rect x="0.5" y="0.5" width="17" height="12" fill="#b8c8e0" stroke="#6a6a80"/><rect x="2" y="2" width="14" height="9" fill="#f0b0b8"/><circle cx="9" cy="6.5" r="3.2" fill="#fff" stroke="#333" stroke-width="1.2"/><rect x="5" y="14.5" width="8" height="1.2" fill="#777"/></svg>
<svg style="left:1101px;top:836px" width="18" height="17" viewBox="0 0 18 17"><path d="M1 9 L8 2 L15 9 L8 16 Z" fill="#fff" stroke="#444" stroke-width="1.2"/><path d="M2 9.5 H14 L8 15.5 Z" fill="#e88a20"/><path d="M6 3 L9 0" stroke="#444"/><path d="M15 10 C17 12 17 14 16 15" stroke="#e88a20" stroke-width="1.5" fill="none"/></svg>
<svg style="left:1127px;top:834px" width="21" height="20" viewBox="0 0 21 20"><rect x="0.7" y="0.7" width="19.6" height="18.6" fill="#fff" stroke="#333" stroke-width="1.3"/><path d="M1 1 L20 19 M20 1 L1 19" stroke="#111" stroke-width="1.2"/></svg>
<div class="t" style="left:1151px;top:838px;font-size:14px;color:#222">None</div>
<div class="a" style="left:1340px;top:832px;width:1px;height:24px;background:#dcdce0"></div>
<svg style="left:1350px;top:835px" width="12" height="18" viewBox="0 0 12 18"><path d="M6 1 L10.5 9 L9 13 H3 L1.5 9 Z" fill="#fff" stroke="#444" stroke-width="1.1"/><path d="M6 5 V10" stroke="#444"/><circle cx="6" cy="10" r="1" fill="#444"/><rect x="1" y="15.5" width="10" height="2" fill="#333"/></svg>
<div class="a" style="left:1371px;top:835px;width:21px;height:19px;background:#1a0a0a"></div>
<div class="t" style="left:1395px;top:838px;font-size:14px;color:#222;letter-spacing:-0.4px;white-space:pre">C:0 M:0 Y:0 K:100  2 px</div>
<!-- tooltip -->
<div class="a" style="left:35px;top:527px;width:262px;height:42px;background:#fff;border:1px solid #8a8a8a;box-shadow:2px 2px 3px rgba(0,0,0,.22)"></div>
<div class="t" style="left:41px;top:531px;font-size:14px;font-weight:bold;color:#4a4a4a">Text tool (F8)</div>
<div class="t" style="left:41px;top:550px;font-size:14px;color:#4a4a4a">Add and edit paragraph and artistic text.</div>
</body></html>
